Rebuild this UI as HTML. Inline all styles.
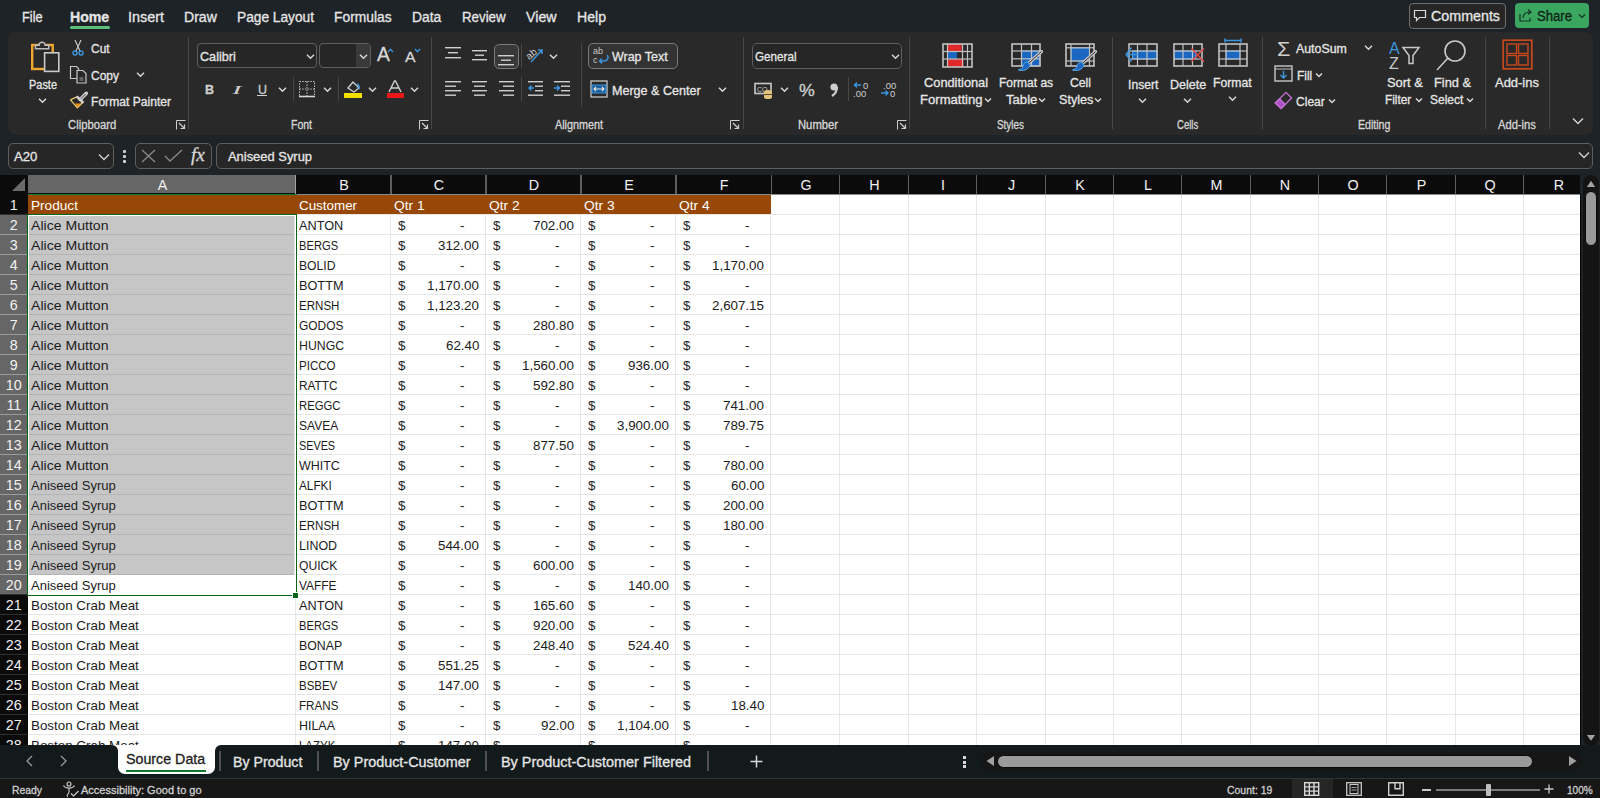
<!DOCTYPE html><html><head><meta charset="utf-8"><style>
html,body{margin:0;padding:0;width:1600px;height:798px;overflow:hidden;background:#1e2327;}
body>div,body div{position:absolute;}
.t{white-space:pre;font-family:"Liberation Sans",sans-serif;}
.u{-webkit-text-stroke:0.3px currentColor;}
</style></head><body>
<div style="left:0px;top:0px;width:1600px;height:175px;background:#1e2327;"></div>
<div class="t u" style="left:22.40px;top:10.10px;font-size:14px;line-height:14px;color:#e6e6e6;transform:scaleX(0.9131);transform-origin:0 0;">File</div>
<div class="t u" style="left:70.40px;top:10.10px;font-size:14px;line-height:14px;color:#e6e6e6;font-weight:700;transform:scaleX(1.0078);transform-origin:0 0;">Home</div>
<div class="t u" style="left:128.00px;top:10.10px;font-size:14px;line-height:14px;color:#e6e6e6;transform:scaleX(1.0282);transform-origin:0 0;">Insert</div>
<div class="t u" style="left:183.60px;top:10.10px;font-size:14px;line-height:14px;color:#e6e6e6;transform:scaleX(1.0040);transform-origin:0 0;">Draw</div>
<div class="t u" style="left:237.00px;top:10.10px;font-size:14px;line-height:14px;color:#e6e6e6;transform:scaleX(0.9794);transform-origin:0 0;">Page Layout</div>
<div class="t u" style="left:334.40px;top:10.10px;font-size:14px;line-height:14px;color:#e6e6e6;transform:scaleX(0.9872);transform-origin:0 0;">Formulas</div>
<div class="t u" style="left:412.40px;top:10.10px;font-size:14px;line-height:14px;color:#e6e6e6;transform:scaleX(0.9874);transform-origin:0 0;">Data</div>
<div class="t u" style="left:462.40px;top:10.10px;font-size:14px;line-height:14px;color:#e6e6e6;transform:scaleX(0.9498);transform-origin:0 0;">Review</div>
<div class="t u" style="left:526.40px;top:10.10px;font-size:14px;line-height:14px;color:#e6e6e6;transform:scaleX(1.0168);transform-origin:0 0;">View</div>
<div class="t u" style="left:576.60px;top:10.10px;font-size:14px;line-height:14px;color:#e6e6e6;transform:scaleX(1.0072);transform-origin:0 0;">Help</div>
<div style="left:70px;top:26px;width:40px;height:3px;background:#5cc07c;border-radius:2px;"></div>
<div style="left:1409px;top:3px;width:97px;height:25.5px;background:#262626;border:1.5px solid #6e6e6e;border-radius:4px;box-sizing:border-box;"></div>
<svg style="position:absolute;left:1413px;top:9px;" width="14" height="13" viewBox="0 0 14 13"><path d="M1.5 1.5h11v7h-6l-3 3v-3h-2z" fill="none" stroke="#dcdcdc" stroke-width="1.2"/></svg>
<div class="t u" style="left:1431.00px;top:9.40px;font-size:14px;line-height:14px;color:#e6e6e6;transform:scaleX(1.0194);transform-origin:0 0;">Comments</div>
<div style="left:1515px;top:3px;width:74px;height:25px;background:#3aa660;border-radius:4px;"></div>
<svg style="position:absolute;left:1518px;top:8px;" width="16" height="15" viewBox="0 0 16 15"><path d="M2 6v7h10v-3" fill="none" stroke="#163020" stroke-width="1.2"/><path d="M5 10c0-4 3-6 7-6M10 1.5l3 2.5-3 2.5" fill="none" stroke="#163020" stroke-width="1.2"/></svg>
<div class="t u" style="left:1537.00px;top:9.40px;font-size:14px;line-height:14px;color:#0e2316;transform:scaleX(0.9368);transform-origin:0 0;">Share</div>
<svg style="position:absolute;left:1577px;top:11px;" width="10" height="10" viewBox="0 0 10 10"><polyline points="2,3.5 5,6.5 8,3.5" fill="none" stroke="#163020" stroke-width="1.2"/></svg>
<div style="left:8px;top:32px;width:1585px;height:103px;background:#292929;border-radius:8px;"></div>
<div style="left:188px;top:37px;width:1px;height:92px;background:#474747;"></div>
<div style="left:431px;top:37px;width:1px;height:92px;background:#474747;"></div>
<div style="left:743px;top:37px;width:1px;height:92px;background:#474747;"></div>
<div style="left:909px;top:37px;width:1px;height:92px;background:#474747;"></div>
<div style="left:1112px;top:37px;width:1px;height:92px;background:#474747;"></div>
<div style="left:1262px;top:37px;width:1px;height:92px;background:#474747;"></div>
<div style="left:1485px;top:37px;width:1px;height:92px;background:#474747;"></div>
<div style="left:1549px;top:37px;width:1px;height:92px;background:#474747;"></div>
<div class="t u" style="left:67.50px;top:119.30px;font-size:12px;line-height:12px;color:#d8d8d8;transform:scaleX(0.9403);transform-origin:0 0;">Clipboard</div>
<div class="t u" style="left:291.00px;top:119.30px;font-size:12px;line-height:12px;color:#d8d8d8;transform:scaleX(0.8746);transform-origin:0 0;">Font</div>
<div class="t u" style="left:555.00px;top:119.30px;font-size:12px;line-height:12px;color:#d8d8d8;transform:scaleX(0.8995);transform-origin:0 0;">Alignment</div>
<div class="t u" style="left:797.60px;top:119.30px;font-size:12px;line-height:12px;color:#d8d8d8;transform:scaleX(0.9372);transform-origin:0 0;">Number</div>
<div class="t u" style="left:997.00px;top:119.30px;font-size:12px;line-height:12px;color:#d8d8d8;transform:scaleX(0.8262);transform-origin:0 0;">Styles</div>
<div class="t u" style="left:1176.80px;top:119.30px;font-size:12px;line-height:12px;color:#d8d8d8;transform:scaleX(0.7948);transform-origin:0 0;">Cells</div>
<div class="t u" style="left:1357.60px;top:119.30px;font-size:12px;line-height:12px;color:#d8d8d8;transform:scaleX(0.8830);transform-origin:0 0;">Editing</div>
<div class="t u" style="left:1498.00px;top:119.30px;font-size:12px;line-height:12px;color:#d8d8d8;transform:scaleX(0.9290);transform-origin:0 0;">Add-ins</div>
<svg style="position:absolute;left:175.5px;top:120px;" width="10" height="10" viewBox="0 0 10 10"><path d="M0.5 9.5V0.5H9.5" fill="none" stroke="#cfcfcf" stroke-width="1"/><path d="M0.5 0.5" /><path d="M3 3L8.5 8.5M8.5 4.5V8.5H4.5" fill="none" stroke="#cfcfcf" stroke-width="1.2"/></svg>
<svg style="position:absolute;left:419px;top:120px;" width="10" height="10" viewBox="0 0 10 10"><path d="M0.5 9.5V0.5H9.5" fill="none" stroke="#cfcfcf" stroke-width="1"/><path d="M0.5 0.5" /><path d="M3 3L8.5 8.5M8.5 4.5V8.5H4.5" fill="none" stroke="#cfcfcf" stroke-width="1.2"/></svg>
<svg style="position:absolute;left:730px;top:120px;" width="10" height="10" viewBox="0 0 10 10"><path d="M0.5 9.5V0.5H9.5" fill="none" stroke="#cfcfcf" stroke-width="1"/><path d="M0.5 0.5" /><path d="M3 3L8.5 8.5M8.5 4.5V8.5H4.5" fill="none" stroke="#cfcfcf" stroke-width="1.2"/></svg>
<svg style="position:absolute;left:897px;top:120px;" width="10" height="10" viewBox="0 0 10 10"><path d="M0.5 9.5V0.5H9.5" fill="none" stroke="#cfcfcf" stroke-width="1"/><path d="M0.5 0.5" /><path d="M3 3L8.5 8.5M8.5 4.5V8.5H4.5" fill="none" stroke="#cfcfcf" stroke-width="1.2"/></svg>
<svg style="position:absolute;left:30px;top:39px;" width="31" height="34" viewBox="0 0 31 34"><rect x="2.2" y="6" width="20.5" height="24" fill="none" stroke="#f0a830" stroke-width="2.4"/><path d="M5.5 9.8V6.2h3.6a3 3 0 0 1 6 0h3.6v3.6z" fill="#292929" stroke="#bdbdbd" stroke-width="1.5"/><rect x="14.6" y="13.8" width="14.2" height="18.6" fill="#292929" stroke="#cacaca" stroke-width="1.6"/></svg>
<div class="t u" style="left:28.50px;top:78.88px;font-size:12.5px;line-height:12.5px;color:#e6e6e6;transform:scaleX(0.8760);transform-origin:0 0;">Paste</div>
<svg style="position:absolute;left:36.5px;top:94.5px;" width="11.0" height="11.0" viewBox="0 0 11.0 11.0"><polyline points="2,3.8 5.5,7.2 9.0,3.8" fill="none" stroke="#d8d8d8" stroke-width="1.5"/></svg>
<svg style="position:absolute;left:72px;top:39px;" width="14" height="18" viewBox="0 0 14 18"><path d="M3 1l5 11M9 1L4 12" stroke="#cfcfcf" stroke-width="1.1" fill="none"/><circle cx="3" cy="14" r="2" fill="none" stroke="#3c95de" stroke-width="1.4"/><circle cx="9" cy="14" r="2" fill="none" stroke="#3c95de" stroke-width="1.4"/></svg>
<div class="t u" style="left:91.00px;top:42.88px;font-size:12.5px;line-height:12.5px;color:#e6e6e6;transform:scaleX(0.9562);transform-origin:0 0;">Cut</div>
<svg style="position:absolute;left:69px;top:65px;" width="19" height="19" viewBox="0 0 19 19"><path d="M1.5 1.5h6l2 2v10h-8z" fill="none" stroke="#c8c8c8" stroke-width="1.2"/><path d="M8 5.5h6l3 3v9.5h-9z" fill="#292929" stroke="#c8c8c8" stroke-width="1.2"/><path d="M10.5 13h4M10.5 15h4" stroke="#9a9a9a" stroke-width="1"/></svg>
<div class="t u" style="left:91.00px;top:69.88px;font-size:12.5px;line-height:12.5px;color:#e6e6e6;transform:scaleX(0.9595);transform-origin:0 0;">Copy</div>
<svg style="position:absolute;left:135.0px;top:68.5px;" width="11.0" height="11.0" viewBox="0 0 11.0 11.0"><polyline points="2,3.8 5.5,7.2 9.0,3.8" fill="none" stroke="#d8d8d8" stroke-width="1.5"/></svg>
<svg style="position:absolute;left:69px;top:90px;" width="21" height="20" viewBox="0 0 21 20"><path d="M1.5 9.9L7.9 6.8 14.2 12 8.3 17.8z" fill="#292929" stroke="#f2d272" stroke-width="1.2" stroke-linejoin="round"/><path d="M5.5 13.5L12.5 13.5 8.4 17z" fill="#e89020"/><path d="M7.8 6.3l6.5 6.5" stroke="#d0d0d0" stroke-width="2.6"/><path d="M11.2 9.4L17.3 3.3" stroke="#d0d0d0" stroke-width="3.6" stroke-linecap="round"/><path d="M12 8.6L16.6 4" stroke="#3a3a3a" stroke-width="1"/></svg>
<div class="t u" style="left:91.00px;top:95.88px;font-size:12.5px;line-height:12.5px;color:#e6e6e6;transform:scaleX(0.9677);transform-origin:0 0;">Format Painter</div>
<div style="left:197px;top:43px;width:120px;height:25px;background:#262626;border:1.5px solid #5e5e5e;border-radius:4px;box-sizing:border-box;"></div>
<div class="t u" style="left:199.50px;top:50.45px;font-size:13px;line-height:13px;color:#e6e6e6;transform:scaleX(0.9717);transform-origin:0 0;">Calibri</div>
<svg style="position:absolute;left:305.0px;top:50.5px;" width="11.0" height="11.0" viewBox="0 0 11.0 11.0"><polyline points="2,3.8 5.5,7.2 9.0,3.8" fill="none" stroke="#d8d8d8" stroke-width="1.5"/></svg>
<div style="left:319px;top:43px;width:52px;height:25px;background:#262626;border:1.5px solid #5e5e5e;border-radius:4px;box-sizing:border-box;"></div>
<div style="left:356px;top:44px;width:14px;height:23px;background:#3a3a3a;border-radius:0 3px 3px 0;"></div>
<svg style="position:absolute;left:357.5px;top:50.5px;" width="11.0" height="11.0" viewBox="0 0 11.0 11.0"><polyline points="2,3.8 5.5,7.2 9.0,3.8" fill="none" stroke="#d8d8d8" stroke-width="1.5"/></svg>
<div class="t u" style="left:376.50px;top:44.92px;font-size:19.5px;line-height:19.5px;color:#d8d8d8;transform:scaleX(0.9841);transform-origin:0 0;">A</div>
<svg style="position:absolute;left:387px;top:48px;" width="7" height="5" viewBox="0 0 7 5"><polyline points="1,4 3.5,1.2 6,4" fill="none" stroke="#3c95de" stroke-width="1.3"/></svg>
<div class="t u" style="left:404.80px;top:48.75px;font-size:15px;line-height:15px;color:#d8d8d8;transform:scaleX(1.0494);transform-origin:0 0;">A</div>
<svg style="position:absolute;left:413.5px;top:47.5px;" width="7" height="5" viewBox="0 0 7 5"><polyline points="1,1 3.5,3.8 6,1" fill="none" stroke="#3c95de" stroke-width="1.3"/></svg>
<div class="t u" style="left:205.00px;top:82.53px;font-size:13.5px;line-height:13.5px;color:#cfcfcf;font-weight:700;transform:scaleX(0.9231);transform-origin:0 0;">B</div>
<div class="t" style="left:232.00px;top:82.53px;font-size:13.5px;line-height:13.5px;color:#cfcfcf;transform:scaleX(2.1331);transform-origin:0 0;font-family:'Liberation Serif';font-style:italic;">I</div>
<div class="t u" style="left:257.50px;top:82.95px;font-size:13px;line-height:13px;color:#cfcfcf;transform:scaleX(0.9586);transform-origin:0 0;">U</div>
<div style="left:257px;top:95px;width:10px;height:1px;background:#cfcfcf;"></div>
<svg style="position:absolute;left:276.5px;top:83.5px;" width="11.0" height="11.0" viewBox="0 0 11.0 11.0"><polyline points="2,3.8 5.5,7.2 9.0,3.8" fill="none" stroke="#d8d8d8" stroke-width="1.5"/></svg>
<div style="left:293px;top:77px;width:1px;height:24px;background:#474747;"></div>
<svg style="position:absolute;left:298px;top:80px;" width="19" height="18" viewBox="0 0 19 18"><path d="M1.5 1.5h15v15h-15zM9 1.5v15M1.5 9h15" fill="none" stroke="#bdbdbd" stroke-width="1" stroke-dasharray="1.5 1.2"/><path d="M1 16.5h16" stroke="#d8d8d8" stroke-width="1.6"/></svg>
<svg style="position:absolute;left:321.5px;top:83.5px;" width="11.0" height="11.0" viewBox="0 0 11.0 11.0"><polyline points="2,3.8 5.5,7.2 9.0,3.8" fill="none" stroke="#d8d8d8" stroke-width="1.5"/></svg>
<div style="left:338px;top:77px;width:1px;height:24px;background:#474747;"></div>
<svg style="position:absolute;left:344px;top:80px;" width="19" height="19" viewBox="0 0 19 19"><path d="M4 8l5-6 6 6-5 4z" fill="none" stroke="#cfcfcf" stroke-width="1.3"/><path d="M13 4c2 1 2.5 3 2 5" fill="none" stroke="#3c95de" stroke-width="1.4"/><rect x="0" y="13" width="18" height="5" fill="#f4e000"/></svg>
<svg style="position:absolute;left:366.5px;top:83.5px;" width="11.0" height="11.0" viewBox="0 0 11.0 11.0"><polyline points="2,3.8 5.5,7.2 9.0,3.8" fill="none" stroke="#d8d8d8" stroke-width="1.5"/></svg>
<svg style="position:absolute;left:386px;top:80px;" width="19" height="19" viewBox="0 0 19 19"><path d="M3 12L8.5 1h1L15 12M5.5 8h8" fill="none" stroke="#cfcfcf" stroke-width="1.4"/><rect x="1" y="13" width="17" height="5" fill="#e81818"/></svg>
<svg style="position:absolute;left:409.0px;top:83.5px;" width="11.0" height="11.0" viewBox="0 0 11.0 11.0"><polyline points="2,3.8 5.5,7.2 9.0,3.8" fill="none" stroke="#d8d8d8" stroke-width="1.5"/></svg>
<svg style="position:absolute;left:445px;top:46px;" width="20" height="20" viewBox="0 0 20 20"><rect x="0" y="1" width="16" height="1.4" fill="#cfcfcf"/><rect x="3" y="6" width="10" height="1.4" fill="#cfcfcf"/><rect x="0" y="11" width="16" height="1.4" fill="#cfcfcf"/></svg>
<svg style="position:absolute;left:472px;top:49px;" width="20" height="20" viewBox="0 0 20 20"><rect x="0" y="1" width="15" height="1.4" fill="#cfcfcf"/><rect x="3" y="5.5" width="9" height="1.4" fill="#cfcfcf"/><rect x="0" y="10" width="15" height="1.4" fill="#cfcfcf"/></svg>
<div style="left:494px;top:43.5px;width:24.5px;height:25px;background:#383838;border:1.5px solid #7a7a7a;border-radius:5px;box-sizing:border-box;"></div>
<svg style="position:absolute;left:498px;top:54px;" width="20" height="20" viewBox="0 0 20 20"><rect x="0" y="1" width="16" height="1.4" fill="#cfcfcf"/><rect x="3" y="5.5" width="10" height="1.4" fill="#cfcfcf"/><rect x="0" y="10" width="16" height="1.4" fill="#cfcfcf"/></svg>
<div style="left:521px;top:44px;width:1px;height:24px;background:#474747;"></div>
<svg style="position:absolute;left:526px;top:46px;" width="20" height="18" viewBox="0 0 20 18"><text x="0" y="11" font-family="Liberation Sans" font-size="10" fill="#cfcfcf" transform="rotate(-40 6 8)">ab</text><path d="M5 16L16 4M12 4h4v4" fill="none" stroke="#3c95de" stroke-width="1.5"/></svg>
<svg style="position:absolute;left:547.5px;top:50.5px;" width="11.0" height="11.0" viewBox="0 0 11.0 11.0"><polyline points="2,3.8 5.5,7.2 9.0,3.8" fill="none" stroke="#d8d8d8" stroke-width="1.5"/></svg>
<div style="left:581px;top:43px;width:1px;height:64px;background:#474747;"></div>
<div style="left:587.5px;top:43px;width:90px;height:25.5px;background:#333333;border:1.5px solid #7a7a7a;border-radius:5px;box-sizing:border-box;"></div>
<svg style="position:absolute;left:593px;top:46px;" width="17" height="19" viewBox="0 0 17 19"><text x="0" y="8" font-family="Liberation Sans" font-size="9" fill="#c8c8c8">ab</text><text x="0" y="17" font-family="Liberation Sans" font-size="9" fill="#c8c8c8">c</text><path d="M14 9c2 2 1 6-3 6H7M9 12.5l-2.5 2.5 2.5 2.5" fill="none" stroke="#3c95de" stroke-width="1.4"/></svg>
<div class="t u" style="left:612.40px;top:50.45px;font-size:13px;line-height:13px;color:#e6e6e6;transform:scaleX(0.9579);transform-origin:0 0;">Wrap Text</div>
<svg style="position:absolute;left:445px;top:80px;" width="20" height="20" viewBox="0 0 20 20"><rect x="0" y="1" width="16" height="1.4" fill="#cfcfcf"/><rect x="0" y="5.5" width="11" height="1.4" fill="#cfcfcf"/><rect x="0" y="10" width="16" height="1.4" fill="#cfcfcf"/><rect x="0" y="14.5" width="11" height="1.4" fill="#cfcfcf"/></svg>
<svg style="position:absolute;left:472px;top:80px;" width="20" height="20" viewBox="0 0 20 20"><rect x="0" y="1" width="15" height="1.4" fill="#cfcfcf"/><rect x="2" y="5.5" width="11" height="1.4" fill="#cfcfcf"/><rect x="0" y="10" width="15" height="1.4" fill="#cfcfcf"/><rect x="2" y="14.5" width="11" height="1.4" fill="#cfcfcf"/></svg>
<svg style="position:absolute;left:499px;top:80px;" width="20" height="20" viewBox="0 0 20 20"><rect x="0" y="1" width="15" height="1.4" fill="#cfcfcf"/><rect x="4" y="5.5" width="11" height="1.4" fill="#cfcfcf"/><rect x="0" y="10" width="15" height="1.4" fill="#cfcfcf"/><rect x="4" y="14.5" width="11" height="1.4" fill="#cfcfcf"/></svg>
<div style="left:521px;top:77px;width:1px;height:24px;background:#474747;"></div>
<svg style="position:absolute;left:528px;top:80px;" width="16" height="17" viewBox="0 0 16 17"><rect x="0" y="1" width="15" height="1.4" fill="#cfcfcf"/><rect x="7" y="5.5" width="8" height="1.4" fill="#cfcfcf"/><rect x="7" y="10" width="8" height="1.4" fill="#cfcfcf"/><rect x="0" y="14.5" width="15" height="1.4" fill="#cfcfcf"/><path d="M6 8H1M3.5 5.5L1 8l2.5 2.5" fill="none" stroke="#3c95de" stroke-width="1.4"/></svg>
<svg style="position:absolute;left:554px;top:80px;" width="17" height="17" viewBox="0 0 17 17"><rect x="0" y="1" width="16" height="1.4" fill="#cfcfcf"/><rect x="7" y="5.5" width="9" height="1.4" fill="#cfcfcf"/><rect x="7" y="10" width="9" height="1.4" fill="#cfcfcf"/><rect x="0" y="14.5" width="16" height="1.4" fill="#cfcfcf"/><path d="M0 8h5.5M3 5.5L5.5 8 3 10.5" fill="none" stroke="#3c95de" stroke-width="1.4"/></svg>
<svg style="position:absolute;left:590px;top:80px;" width="19" height="18" viewBox="0 0 19 18"><rect x="1" y="1" width="16" height="16" fill="none" stroke="#bdbdbd" stroke-width="1.4"/><rect x="2" y="5" width="14" height="8" fill="#1c5e9a" stroke="#3c95de" stroke-width="1"/><path d="M4 9h10M6 7l-2 2 2 2M12 7l2 2-2 2" fill="none" stroke="#e8e8e8" stroke-width="1.1"/></svg>
<div class="t u" style="left:612.40px;top:84.45px;font-size:13px;line-height:13px;color:#e6e6e6;transform:scaleX(0.9655);transform-origin:0 0;">Merge &amp; Center</div>
<svg style="position:absolute;left:716.5px;top:84.0px;" width="11.0" height="11.0" viewBox="0 0 11.0 11.0"><polyline points="2,3.8 5.5,7.2 9.0,3.8" fill="none" stroke="#d8d8d8" stroke-width="1.5"/></svg>
<div style="left:751.5px;top:43px;width:150px;height:25.5px;background:#262626;border:1.5px solid #5e5e5e;border-radius:5px;box-sizing:border-box;"></div>
<div class="t u" style="left:754.50px;top:50.45px;font-size:13px;line-height:13px;color:#e6e6e6;transform:scaleX(0.8973);transform-origin:0 0;">General</div>
<svg style="position:absolute;left:890.0px;top:50.5px;" width="11.0" height="11.0" viewBox="0 0 11.0 11.0"><polyline points="2,3.8 5.5,7.2 9.0,3.8" fill="none" stroke="#d8d8d8" stroke-width="1.5"/></svg>
<svg style="position:absolute;left:754px;top:82px;" width="20" height="17" viewBox="0 0 20 17"><rect x="1" y="1.5" width="16" height="10" fill="none" stroke="#c8c8c8" stroke-width="1.6"/><text x="3" y="10" font-size="7" font-family="Liberation Sans" fill="#c8c8c8">CO</text><ellipse cx="14" cy="10" rx="4" ry="2" fill="#e6c27a"/><rect x="10" y="10" width="8" height="5" fill="#e6c27a"/><ellipse cx="14" cy="15" rx="4" ry="2" fill="#e6c27a"/><path d="M10 12.5h8" stroke="#292929" stroke-width="0.8"/></svg>
<svg style="position:absolute;left:778.5px;top:84.0px;" width="11.0" height="11.0" viewBox="0 0 11.0 11.0"><polyline points="2,3.8 5.5,7.2 9.0,3.8" fill="none" stroke="#d8d8d8" stroke-width="1.5"/></svg>
<div class="t u" style="left:798.60px;top:83.40px;font-size:16px;line-height:16px;color:#cfcfcf;transform:scaleX(1.1106);transform-origin:0 0;">%</div>
<svg style="position:absolute;left:829px;top:82px;" width="11" height="15" viewBox="0 0 11 15"><circle cx="5" cy="5" r="3.6" fill="#cfcfcf"/><path d="M8 5c0 4-2 7-5 9" fill="none" stroke="#cfcfcf" stroke-width="2.2"/></svg>
<div style="left:848px;top:77px;width:1px;height:24px;background:#474747;"></div>
<svg style="position:absolute;left:853px;top:80px;" width="18" height="18" viewBox="0 0 18 18"><path d="M8 5H1.5M4 2.5L1.5 5 4 7.5" fill="none" stroke="#3c95de" stroke-width="1.4"/><text x="10" y="9" font-size="9.5" font-family="Liberation Sans" fill="#cfcfcf">0</text><text x="0" y="17" font-size="9.5" font-family="Liberation Sans" fill="#cfcfcf">.00</text></svg>
<svg style="position:absolute;left:880px;top:80px;" width="18" height="18" viewBox="0 0 18 18"><text x="3" y="9" font-size="9.5" font-family="Liberation Sans" fill="#cfcfcf">.00</text><text x="10" y="17" font-size="9.5" font-family="Liberation Sans" fill="#cfcfcf">0</text><path d="M1 13h7M5.5 10.5L8 13l-2.5 2.5" fill="none" stroke="#3c95de" stroke-width="1.4"/></svg>
<svg style="position:absolute;left:942px;top:43px;" width="31" height="25" viewBox="0 0 31 25"><rect x="5.5" y="1" width="14" height="7.5" fill="#e0282a"/><rect x="5.5" y="8.5" width="9.5" height="7.5" fill="#1a66c0"/><rect x="5.5" y="16" width="16" height="8" fill="#e0282a"/><rect x="1" y="1" width="29" height="23" fill="none" stroke="#c2c2c2" stroke-width="1.6"/><path d="M5.5 1V24" stroke="#c2c2c2" stroke-width="1.2"/><path d="M20.5 1V24" stroke="#c2c2c2" stroke-width="1.2"/><path d="M25.5 1V24" stroke="#c2c2c2" stroke-width="1.2"/><path d="M1 8.5H30" stroke="#c2c2c2" stroke-width="1.2"/><path d="M1 16H30" stroke="#c2c2c2" stroke-width="1.2"/></svg>
<div class="t u" style="left:924.30px;top:76.45px;font-size:13px;line-height:13px;color:#e6e6e6;transform:scaleX(0.9854);transform-origin:0 0;">Conditional</div>
<div class="t u" style="left:920.40px;top:92.95px;font-size:13px;line-height:13px;color:#e6e6e6;transform:scaleX(1.0075);transform-origin:0 0;">Formatting</div>
<svg style="position:absolute;left:983px;top:94.5px;" width="10" height="10" viewBox="0 0 10 10"><polyline points="2,3.5 5,6.5 8,3.5" fill="none" stroke="#d8d8d8" stroke-width="1.5"/></svg>
<svg style="position:absolute;left:1011px;top:43px;" width="30" height="24" viewBox="0 0 30 24"><rect x="10.5" y="8" width="18.5" height="15" fill="#1a66c0" stroke="#5aaef0" stroke-width="0.8"/><rect x="1" y="1" width="28" height="22" fill="none" stroke="#c2c2c2" stroke-width="1.6"/><path d="M10.5 1V23" stroke="#c2c2c2" stroke-width="1.2"/><path d="M20.5 1V23" stroke="#c2c2c2" stroke-width="1.2"/><path d="M1 8H29" stroke="#c2c2c2" stroke-width="1.2"/><path d="M1 15.8H29" stroke="#c2c2c2" stroke-width="1.2"/></svg>
<svg style="position:absolute;left:1018px;top:50px;" width="26" height="23" viewBox="0 0 26 23"><path d="M23.5 1.5L11 13" stroke="#c8c8c8" stroke-width="3.2" stroke-linecap="round"/><path d="M23.5 1.5L11 13" stroke="#292929" stroke-width="1"/><path d="M10.5 12.5c-3-1-5.5 1-5.5 3.5 0 2-2.5 3.2-4.5 4 4.5 1.2 9.5 0 11.5-4.5z" fill="#1a66c0" stroke="#5aaef0" stroke-width="1"/></svg>
<div class="t u" style="left:998.70px;top:76.45px;font-size:13px;line-height:13px;color:#e6e6e6;transform:scaleX(0.9246);transform-origin:0 0;">Format as</div>
<div class="t u" style="left:1005.60px;top:92.95px;font-size:13px;line-height:13px;color:#e6e6e6;transform:scaleX(1.0103);transform-origin:0 0;">Table</div>
<svg style="position:absolute;left:1036.5px;top:94.5px;" width="10" height="10" viewBox="0 0 10 10"><polyline points="2,3.5 5,6.5 8,3.5" fill="none" stroke="#d8d8d8" stroke-width="1.5"/></svg>
<svg style="position:absolute;left:1065px;top:43px;" width="30" height="24" viewBox="0 0 30 24"><rect x="6" y="4.8" width="18.5" height="13.2" fill="#1a66c0" stroke="#5aaef0" stroke-width="0.8"/><rect x="1" y="1" width="28" height="22" fill="none" stroke="#c2c2c2" stroke-width="1.6"/><path d="M6 1V23" stroke="#c2c2c2" stroke-width="1.2"/><path d="M24.5 1V23" stroke="#c2c2c2" stroke-width="1.2"/><path d="M1 4.8H29" stroke="#c2c2c2" stroke-width="1.2"/><path d="M1 18H29" stroke="#c2c2c2" stroke-width="1.2"/></svg>
<svg style="position:absolute;left:1072px;top:50px;" width="26" height="23" viewBox="0 0 26 23"><path d="M23.5 1.5L11 13" stroke="#c8c8c8" stroke-width="3.2" stroke-linecap="round"/><path d="M23.5 1.5L11 13" stroke="#292929" stroke-width="1"/><path d="M10.5 12.5c-3-1-5.5 1-5.5 3.5 0 2-2.5 3.2-4.5 4 4.5 1.2 9.5 0 11.5-4.5z" fill="#1a66c0" stroke="#5aaef0" stroke-width="1"/></svg>
<div class="t u" style="left:1070.00px;top:76.45px;font-size:13px;line-height:13px;color:#e6e6e6;transform:scaleX(0.9377);transform-origin:0 0;">Cell</div>
<div class="t u" style="left:1058.70px;top:92.95px;font-size:13px;line-height:13px;color:#e6e6e6;transform:scaleX(0.9689);transform-origin:0 0;">Styles</div>
<svg style="position:absolute;left:1093px;top:94.5px;" width="10" height="10" viewBox="0 0 10 10"><polyline points="2,3.5 5,6.5 8,3.5" fill="none" stroke="#d8d8d8" stroke-width="1.5"/></svg>
<svg style="position:absolute;left:1128px;top:43px;" width="30" height="24" viewBox="0 0 30 24"><rect x="4.5" y="8" width="27" height="8" fill="#1a66c0" stroke="#5aaef0" stroke-width="1"/><rect x="1" y="1" width="28" height="22" fill="none" stroke="#c2c2c2" stroke-width="1.6"/><path d="M9.5 1V23" stroke="#c2c2c2" stroke-width="1.2"/><path d="M19 1V23" stroke="#c2c2c2" stroke-width="1.2"/><path d="M1 8H29" stroke="#c2c2c2" stroke-width="1.2"/><path d="M1 16H29" stroke="#c2c2c2" stroke-width="1.2"/></svg>
<svg style="position:absolute;left:1125px;top:46px;" width="14" height="17" viewBox="0 0 14 17"><path d="M13 8.5H1.5M6.5 1.5L1 8.5l5.5 7" fill="none" stroke="#3c95de" stroke-width="1.3"/></svg>
<div class="t u" style="left:1127.60px;top:78.45px;font-size:13px;line-height:13px;color:#e6e6e6;transform:scaleX(0.9350);transform-origin:0 0;">Insert</div>
<svg style="position:absolute;left:1137.0px;top:94.5px;" width="11.0" height="11.0" viewBox="0 0 11.0 11.0"><polyline points="2,3.8 5.5,7.2 9.0,3.8" fill="none" stroke="#d8d8d8" stroke-width="1.5"/></svg>
<svg style="position:absolute;left:1173px;top:43px;" width="30" height="24" viewBox="0 0 30 24"><rect x="0" y="8" width="23" height="8" fill="#1a66c0" stroke="#5aaef0" stroke-width="1"/><path d="M0 8v8" stroke="#292929" stroke-width="3"/><rect x="1" y="1" width="28" height="22" fill="none" stroke="#c2c2c2" stroke-width="1.6"/><path d="M10 1V23" stroke="#c2c2c2" stroke-width="1.2"/><path d="M19.5 1V23" stroke="#c2c2c2" stroke-width="1.2"/><path d="M1 8H29" stroke="#c2c2c2" stroke-width="1.2"/><path d="M1 16H29" stroke="#c2c2c2" stroke-width="1.2"/></svg>
<svg style="position:absolute;left:1190px;top:47px;" width="15" height="16" viewBox="0 0 15 16"><path d="M1.5 1.5L14 14.5M14 1.5L1.5 14.5" stroke="#e04848" stroke-width="1.4"/></svg>
<div class="t u" style="left:1169.50px;top:78.45px;font-size:13px;line-height:13px;color:#e6e6e6;transform:scaleX(0.9660);transform-origin:0 0;">Delete</div>
<svg style="position:absolute;left:1182.0px;top:94.5px;" width="11.0" height="11.0" viewBox="0 0 11.0 11.0"><polyline points="2,3.8 5.5,7.2 9.0,3.8" fill="none" stroke="#d8d8d8" stroke-width="1.5"/></svg>
<svg style="position:absolute;left:1224px;top:37.5px;" width="18" height="5" viewBox="0 0 18 5"><path d="M1 0.5v4M17 0.5v4M1 2.5h16" stroke="#3c95de" stroke-width="1.5"/></svg>
<svg style="position:absolute;left:1218px;top:43px;" width="30" height="24" viewBox="0 0 30 24"><rect x="8" y="8" width="14" height="8" fill="#1a66c0" stroke="#5aaef0" stroke-width="1"/><rect x="1" y="1" width="28" height="22" fill="none" stroke="#c2c2c2" stroke-width="1.6"/><path d="M8 1V23" stroke="#c2c2c2" stroke-width="1.2"/><path d="M22 1V23" stroke="#c2c2c2" stroke-width="1.2"/><path d="M1 8H29" stroke="#c2c2c2" stroke-width="1.2"/><path d="M1 16H29" stroke="#c2c2c2" stroke-width="1.2"/></svg>
<div class="t u" style="left:1213.40px;top:76.45px;font-size:13px;line-height:13px;color:#e6e6e6;transform:scaleX(0.9375);transform-origin:0 0;">Format</div>
<svg style="position:absolute;left:1227.0px;top:92.5px;" width="11.0" height="11.0" viewBox="0 0 11.0 11.0"><polyline points="2,3.8 5.5,7.2 9.0,3.8" fill="none" stroke="#d8d8d8" stroke-width="1.5"/></svg>
<div class="t" style="left:1277.00px;top:38.50px;font-size:20px;line-height:20px;color:#cfcfcf;transform:scaleX(1.0757);transform-origin:0 0;">&#931;</div>
<div class="t u" style="left:1296.00px;top:42.88px;font-size:12.5px;line-height:12.5px;color:#e6e6e6;transform:scaleX(0.9880);transform-origin:0 0;">AutoSum</div>
<svg style="position:absolute;left:1363.0px;top:42.0px;" width="11.0" height="11.0" viewBox="0 0 11.0 11.0"><polyline points="2,3.8 5.5,7.2 9.0,3.8" fill="none" stroke="#d8d8d8" stroke-width="1.5"/></svg>
<svg style="position:absolute;left:1274px;top:65px;" width="20" height="18" viewBox="0 0 20 18"><rect x="1" y="1" width="17" height="15" fill="none" stroke="#bdbdbd" stroke-width="1.5"/><path d="M1 4h17" stroke="#bdbdbd" stroke-width="1"/><path d="M9.5 6v7M6.5 10l3 3 3-3" fill="none" stroke="#3c95de" stroke-width="1.4"/></svg>
<div class="t u" style="left:1296.50px;top:69.88px;font-size:12.5px;line-height:12.5px;color:#e6e6e6;transform:scaleX(0.9519);transform-origin:0 0;">Fill</div>
<svg style="position:absolute;left:1314.3px;top:69.5px;" width="10" height="10" viewBox="0 0 10 10"><polyline points="2,3.5 5,6.5 8,3.5" fill="none" stroke="#d8d8d8" stroke-width="1.5"/></svg>
<svg style="position:absolute;left:1274px;top:91px;" width="19" height="19" viewBox="0 0 19 19"><g transform="rotate(-45 9.5 9.5)"><rect x="2" y="5.5" width="15" height="8" fill="none" stroke="#c070d0" stroke-width="1.4"/><rect x="2" y="5.5" width="6" height="8" fill="#b050c8" stroke="#c070d0" stroke-width="1.4"/></g></svg>
<div class="t u" style="left:1296.00px;top:95.88px;font-size:12.5px;line-height:12.5px;color:#e6e6e6;transform:scaleX(0.9641);transform-origin:0 0;">Clear</div>
<svg style="position:absolute;left:1326.7px;top:95.5px;" width="10" height="10" viewBox="0 0 10 10"><polyline points="2,3.5 5,6.5 8,3.5" fill="none" stroke="#d8d8d8" stroke-width="1.5"/></svg>
<svg style="position:absolute;left:1388px;top:40px;" width="34" height="30" viewBox="0 0 34 30"><text x="1" y="14" font-family="Liberation Sans" font-size="16" fill="#3c95de">A</text><text x="1" y="29" font-family="Liberation Sans" font-size="16" fill="#c8c8c8">Z</text><path d="M15 7.5h16l-6 8v8h-4v-8z" fill="none" stroke="#c8c8c8" stroke-width="1.5"/></svg>
<div class="t u" style="left:1386.50px;top:76.45px;font-size:13px;line-height:13px;color:#e6e6e6;transform:scaleX(0.9938);transform-origin:0 0;">Sort &amp;</div>
<div class="t u" style="left:1384.70px;top:92.95px;font-size:13px;line-height:13px;color:#e6e6e6;transform:scaleX(0.9104);transform-origin:0 0;">Filter</div>
<svg style="position:absolute;left:1413.5px;top:94.5px;" width="10" height="10" viewBox="0 0 10 10"><polyline points="2,3.5 5,6.5 8,3.5" fill="none" stroke="#d8d8d8" stroke-width="1.5"/></svg>
<svg style="position:absolute;left:1435px;top:39px;" width="34" height="34" viewBox="0 0 34 34"><circle cx="20" cy="12" r="10" fill="none" stroke="#c8c8c8" stroke-width="1.6"/><path d="M13 19L2 31" stroke="#c8c8c8" stroke-width="1.6"/></svg>
<div class="t u" style="left:1434.00px;top:76.45px;font-size:13px;line-height:13px;color:#e6e6e6;transform:scaleX(0.9821);transform-origin:0 0;">Find &amp;</div>
<div class="t u" style="left:1429.60px;top:92.95px;font-size:13px;line-height:13px;color:#e6e6e6;transform:scaleX(0.9244);transform-origin:0 0;">Select</div>
<svg style="position:absolute;left:1464.5px;top:94.5px;" width="10" height="10" viewBox="0 0 10 10"><polyline points="2,3.5 5,6.5 8,3.5" fill="none" stroke="#d8d8d8" stroke-width="1.5"/></svg>
<svg style="position:absolute;left:1502px;top:39px;" width="32" height="32" viewBox="0 0 32 32"><rect x="1.2" y="1.2" width="28.6" height="28.6" fill="none" stroke="#c9491c" stroke-width="1.7"/><rect x="5" y="5" width="9.5" height="9.5" fill="none" stroke="#c9491c" stroke-width="1.4"/><rect x="16.5" y="5" width="9.5" height="9.5" fill="none" stroke="#c9491c" stroke-width="1.4"/><rect x="5" y="16.5" width="9.5" height="9.5" fill="none" stroke="#c9491c" stroke-width="1.4"/><rect x="16.5" y="16.5" width="9.5" height="9.5" fill="none" stroke="#c9491c" stroke-width="1.4"/></svg>
<div class="t u" style="left:1495.40px;top:76.45px;font-size:13px;line-height:13px;color:#e6e6e6;transform:scaleX(0.9959);transform-origin:0 0;">Add-ins</div>
<svg style="position:absolute;left:1571px;top:113.5px;" width="14" height="14" viewBox="0 0 14 14"><polyline points="2,4.5 7,9.5 12,4.5" fill="none" stroke="#d0d0d0" stroke-width="1.5"/></svg>
<div style="left:8px;top:143px;width:106px;height:25.5px;background:#262626;border:1.5px solid #5e5e5e;border-radius:5px;box-sizing:border-box;"></div>
<div class="t u" style="left:14.00px;top:150.03px;font-size:13.5px;line-height:13.5px;color:#e6e6e6;transform:scaleX(0.9741);transform-origin:0 0;">A20</div>
<svg style="position:absolute;left:96.5px;top:150px;" width="14" height="14" viewBox="0 0 14 14"><polyline points="2,4.5 7,9.5 12,4.5" fill="none" stroke="#d0d0d0" stroke-width="1.4"/></svg>
<div style="left:123px;top:150px;width:3px;height:3px;background:#d0d0d0;border-radius:1px;"></div>
<div style="left:123px;top:155px;width:3px;height:3px;background:#d0d0d0;border-radius:1px;"></div>
<div style="left:123px;top:160px;width:3px;height:3px;background:#d0d0d0;border-radius:1px;"></div>
<div style="left:135px;top:143px;width:76.5px;height:25.5px;background:#262626;border:1.5px solid #5e5e5e;border-radius:5px;box-sizing:border-box;"></div>
<svg style="position:absolute;left:141px;top:149px;" width="15" height="14" viewBox="0 0 15 14"><path d="M1 1L14 13M14 1L1 13" stroke="#8a8a8a" stroke-width="1.3"/></svg>
<svg style="position:absolute;left:164px;top:149px;" width="19" height="13" viewBox="0 0 19 13"><path d="M1 7l5 5L18 1" fill="none" stroke="#8a8a8a" stroke-width="1.3"/></svg>
<div class="t u" style="left:191.00px;top:145.70px;font-size:18px;line-height:18px;color:#d8d8d8;transform:scaleX(1.0714);transform-origin:0 0;font-family:'Liberation Serif';font-style:italic;">fx</div>
<div style="left:216px;top:143px;width:1377px;height:25.5px;background:#262626;border:1.5px solid #5e5e5e;border-radius:5px;box-sizing:border-box;"></div>
<div class="t u" style="left:228.00px;top:150.03px;font-size:13.5px;line-height:13.5px;color:#e6e6e6;transform:scaleX(0.9567);transform-origin:0 0;">Aniseed Syrup</div>
<svg style="position:absolute;left:1576.5px;top:148px;" width="14" height="14" viewBox="0 0 14 14"><polyline points="2,4.5 7,9.5 12,4.5" fill="none" stroke="#d0d0d0" stroke-width="1.4"/></svg>
<div style="left:0px;top:175px;width:1580px;height:20px;background:#0b0b0b;"></div>
<div style="left:0px;top:195px;width:28px;height:550px;background:#0b0b0b;"></div>
<div style="left:28px;top:195px;width:1552px;height:550px;background:#ffffff;"></div>
<div style="left:28px;top:175px;width:267px;height:18px;background:#666666;"></div>
<svg style="position:absolute;left:11px;top:177px;" width="16" height="16" viewBox="0 0 16 16"><path d="M14 1V14H1z" fill="#6b6b6b"/></svg>
<div style="left:295px;top:175px;width:1px;height:19px;background:#a0a0a0;"></div>
<div style="left:390px;top:175px;width:1.5px;height:19px;background:#5e5e5e;"></div>
<div style="left:485px;top:175px;width:1.5px;height:19px;background:#5e5e5e;"></div>
<div style="left:580px;top:175px;width:1.5px;height:19px;background:#5e5e5e;"></div>
<div style="left:675px;top:175px;width:1.5px;height:19px;background:#5e5e5e;"></div>
<div style="left:771px;top:175px;width:1px;height:19px;background:#5e5e5e;"></div>
<div style="left:839px;top:175px;width:1px;height:19px;background:#5e5e5e;"></div>
<div style="left:908px;top:175px;width:1px;height:19px;background:#5e5e5e;"></div>
<div style="left:976px;top:175px;width:1px;height:19px;background:#5e5e5e;"></div>
<div style="left:1045px;top:175px;width:1px;height:19px;background:#5e5e5e;"></div>
<div style="left:1113px;top:175px;width:1px;height:19px;background:#5e5e5e;"></div>
<div style="left:1181px;top:175px;width:1px;height:19px;background:#5e5e5e;"></div>
<div style="left:1250px;top:175px;width:1px;height:19px;background:#5e5e5e;"></div>
<div style="left:1318px;top:175px;width:1px;height:19px;background:#5e5e5e;"></div>
<div style="left:1386px;top:175px;width:1px;height:19px;background:#5e5e5e;"></div>
<div style="left:1455px;top:175px;width:1px;height:19px;background:#5e5e5e;"></div>
<div style="left:1523px;top:175px;width:1px;height:19px;background:#5e5e5e;"></div>
<div style="left:28px;top:194px;width:1552px;height:1px;background:#8a8a8a;"></div>
<div style="left:28px;top:194px;width:269px;height:1px;background:#0b7a3c;"></div>
<div class="t" style="left:157.73px;top:178.34px;font-size:14.3px;line-height:14.3px;color:#f2f2f2;">A</div>
<div class="t" style="left:339.23px;top:178.34px;font-size:14.3px;line-height:14.3px;color:#f2f2f2;">B</div>
<div class="t" style="left:433.84px;top:178.34px;font-size:14.3px;line-height:14.3px;color:#f2f2f2;">C</div>
<div class="t" style="left:528.84px;top:178.34px;font-size:14.3px;line-height:14.3px;color:#f2f2f2;">D</div>
<div class="t" style="left:624.23px;top:178.34px;font-size:14.3px;line-height:14.3px;color:#f2f2f2;">E</div>
<div class="t" style="left:719.63px;top:178.34px;font-size:14.3px;line-height:14.3px;color:#f2f2f2;">F</div>
<div class="t" style="left:800.44px;top:178.34px;font-size:14.3px;line-height:14.3px;color:#f2f2f2;">G</div>
<div class="t" style="left:869.34px;top:178.34px;font-size:14.3px;line-height:14.3px;color:#f2f2f2;">H</div>
<div class="t" style="left:941.01px;top:178.34px;font-size:14.3px;line-height:14.3px;color:#f2f2f2;">I</div>
<div class="t" style="left:1007.92px;top:178.34px;font-size:14.3px;line-height:14.3px;color:#f2f2f2;">J</div>
<div class="t" style="left:1075.23px;top:178.34px;font-size:14.3px;line-height:14.3px;color:#f2f2f2;">K</div>
<div class="t" style="left:1144.02px;top:178.34px;font-size:14.3px;line-height:14.3px;color:#f2f2f2;">L</div>
<div class="t" style="left:1210.54px;top:178.34px;font-size:14.3px;line-height:14.3px;color:#f2f2f2;">M</div>
<div class="t" style="left:1279.84px;top:178.34px;font-size:14.3px;line-height:14.3px;color:#f2f2f2;">N</div>
<div class="t" style="left:1347.44px;top:178.34px;font-size:14.3px;line-height:14.3px;color:#f2f2f2;">O</div>
<div class="t" style="left:1416.73px;top:178.34px;font-size:14.3px;line-height:14.3px;color:#f2f2f2;">P</div>
<div class="t" style="left:1484.44px;top:178.34px;font-size:14.3px;line-height:14.3px;color:#f2f2f2;">Q</div>
<div class="t" style="left:1553.84px;top:178.34px;font-size:14.3px;line-height:14.3px;color:#f2f2f2;">R</div>
<div style="left:0px;top:215px;width:27px;height:380px;background:#666666;"></div>
<div style="left:0px;top:214px;width:27px;height:1px;background:#2e2e2e;"></div>
<div class="t" style="left:9.82px;top:198.34px;font-size:14.3px;line-height:14.3px;color:#f2f2f2;">1</div>
<div style="left:0px;top:234px;width:27px;height:1px;background:#9a9a9a;"></div>
<div class="t" style="left:9.82px;top:218.34px;font-size:14.3px;line-height:14.3px;color:#f2f2f2;">2</div>
<div style="left:0px;top:254px;width:27px;height:1px;background:#9a9a9a;"></div>
<div class="t" style="left:9.82px;top:238.34px;font-size:14.3px;line-height:14.3px;color:#f2f2f2;">3</div>
<div style="left:0px;top:274px;width:27px;height:1px;background:#9a9a9a;"></div>
<div class="t" style="left:9.82px;top:258.35px;font-size:14.3px;line-height:14.3px;color:#f2f2f2;">4</div>
<div style="left:0px;top:294px;width:27px;height:1px;background:#9a9a9a;"></div>
<div class="t" style="left:9.82px;top:278.35px;font-size:14.3px;line-height:14.3px;color:#f2f2f2;">5</div>
<div style="left:0px;top:314px;width:27px;height:1px;background:#9a9a9a;"></div>
<div class="t" style="left:9.82px;top:298.35px;font-size:14.3px;line-height:14.3px;color:#f2f2f2;">6</div>
<div style="left:0px;top:334px;width:27px;height:1px;background:#9a9a9a;"></div>
<div class="t" style="left:9.82px;top:318.35px;font-size:14.3px;line-height:14.3px;color:#f2f2f2;">7</div>
<div style="left:0px;top:354px;width:27px;height:1px;background:#9a9a9a;"></div>
<div class="t" style="left:9.82px;top:338.35px;font-size:14.3px;line-height:14.3px;color:#f2f2f2;">8</div>
<div style="left:0px;top:374px;width:27px;height:1px;background:#9a9a9a;"></div>
<div class="t" style="left:9.82px;top:358.35px;font-size:14.3px;line-height:14.3px;color:#f2f2f2;">9</div>
<div style="left:0px;top:394px;width:27px;height:1px;background:#9a9a9a;"></div>
<div class="t" style="left:5.85px;top:378.35px;font-size:14.3px;line-height:14.3px;color:#f2f2f2;">10</div>
<div style="left:0px;top:414px;width:27px;height:1px;background:#9a9a9a;"></div>
<div class="t" style="left:6.38px;top:398.35px;font-size:14.3px;line-height:14.3px;color:#f2f2f2;">11</div>
<div style="left:0px;top:434px;width:27px;height:1px;background:#9a9a9a;"></div>
<div class="t" style="left:5.85px;top:418.35px;font-size:14.3px;line-height:14.3px;color:#f2f2f2;">12</div>
<div style="left:0px;top:454px;width:27px;height:1px;background:#9a9a9a;"></div>
<div class="t" style="left:5.85px;top:438.35px;font-size:14.3px;line-height:14.3px;color:#f2f2f2;">13</div>
<div style="left:0px;top:474px;width:27px;height:1px;background:#9a9a9a;"></div>
<div class="t" style="left:5.85px;top:458.35px;font-size:14.3px;line-height:14.3px;color:#f2f2f2;">14</div>
<div style="left:0px;top:494px;width:27px;height:1px;background:#9a9a9a;"></div>
<div class="t" style="left:5.85px;top:478.35px;font-size:14.3px;line-height:14.3px;color:#f2f2f2;">15</div>
<div style="left:0px;top:514px;width:27px;height:1px;background:#9a9a9a;"></div>
<div class="t" style="left:5.85px;top:498.35px;font-size:14.3px;line-height:14.3px;color:#f2f2f2;">16</div>
<div style="left:0px;top:534px;width:27px;height:1px;background:#9a9a9a;"></div>
<div class="t" style="left:5.85px;top:518.35px;font-size:14.3px;line-height:14.3px;color:#f2f2f2;">17</div>
<div style="left:0px;top:554px;width:27px;height:1px;background:#9a9a9a;"></div>
<div class="t" style="left:5.85px;top:538.35px;font-size:14.3px;line-height:14.3px;color:#f2f2f2;">18</div>
<div style="left:0px;top:574px;width:27px;height:1px;background:#9a9a9a;"></div>
<div class="t" style="left:5.85px;top:558.35px;font-size:14.3px;line-height:14.3px;color:#f2f2f2;">19</div>
<div style="left:0px;top:594px;width:27px;height:1px;background:#2e2e2e;"></div>
<div class="t" style="left:5.85px;top:578.35px;font-size:14.3px;line-height:14.3px;color:#f2f2f2;">20</div>
<div style="left:0px;top:614px;width:27px;height:1px;background:#2e2e2e;"></div>
<div class="t" style="left:5.85px;top:598.35px;font-size:14.3px;line-height:14.3px;color:#f2f2f2;">21</div>
<div style="left:0px;top:634px;width:27px;height:1px;background:#2e2e2e;"></div>
<div class="t" style="left:5.85px;top:618.35px;font-size:14.3px;line-height:14.3px;color:#f2f2f2;">22</div>
<div style="left:0px;top:654px;width:27px;height:1px;background:#2e2e2e;"></div>
<div class="t" style="left:5.85px;top:638.35px;font-size:14.3px;line-height:14.3px;color:#f2f2f2;">23</div>
<div style="left:0px;top:674px;width:27px;height:1px;background:#2e2e2e;"></div>
<div class="t" style="left:5.85px;top:658.35px;font-size:14.3px;line-height:14.3px;color:#f2f2f2;">24</div>
<div style="left:0px;top:694px;width:27px;height:1px;background:#2e2e2e;"></div>
<div class="t" style="left:5.85px;top:678.35px;font-size:14.3px;line-height:14.3px;color:#f2f2f2;">25</div>
<div style="left:0px;top:714px;width:27px;height:1px;background:#2e2e2e;"></div>
<div class="t" style="left:5.85px;top:698.35px;font-size:14.3px;line-height:14.3px;color:#f2f2f2;">26</div>
<div style="left:0px;top:734px;width:27px;height:1px;background:#2e2e2e;"></div>
<div class="t" style="left:5.85px;top:718.35px;font-size:14.3px;line-height:14.3px;color:#f2f2f2;">27</div>
<div style="left:0px;top:754px;width:27px;height:1px;background:#2e2e2e;"></div>
<div class="t" style="left:5.85px;top:738.35px;font-size:14.3px;line-height:14.3px;color:#f2f2f2;">28</div>
<div style="left:28px;top:215px;width:266px;height:360px;background:#c6c6c6;"></div>
<div style="left:28px;top:195px;width:743px;height:19px;background:#974806;"></div>
<div style="left:28px;top:214px;width:1552px;height:1px;background:#e6e6e6;"></div>
<div style="left:28px;top:234px;width:1552px;height:1px;background:#e6e6e6;"></div>
<div style="left:28px;top:254px;width:1552px;height:1px;background:#e6e6e6;"></div>
<div style="left:28px;top:274px;width:1552px;height:1px;background:#e6e6e6;"></div>
<div style="left:28px;top:294px;width:1552px;height:1px;background:#e6e6e6;"></div>
<div style="left:28px;top:314px;width:1552px;height:1px;background:#e6e6e6;"></div>
<div style="left:28px;top:334px;width:1552px;height:1px;background:#e6e6e6;"></div>
<div style="left:28px;top:354px;width:1552px;height:1px;background:#e6e6e6;"></div>
<div style="left:28px;top:374px;width:1552px;height:1px;background:#e6e6e6;"></div>
<div style="left:28px;top:394px;width:1552px;height:1px;background:#e6e6e6;"></div>
<div style="left:28px;top:414px;width:1552px;height:1px;background:#e6e6e6;"></div>
<div style="left:28px;top:434px;width:1552px;height:1px;background:#e6e6e6;"></div>
<div style="left:28px;top:454px;width:1552px;height:1px;background:#e6e6e6;"></div>
<div style="left:28px;top:474px;width:1552px;height:1px;background:#e6e6e6;"></div>
<div style="left:28px;top:494px;width:1552px;height:1px;background:#e6e6e6;"></div>
<div style="left:28px;top:514px;width:1552px;height:1px;background:#e6e6e6;"></div>
<div style="left:28px;top:534px;width:1552px;height:1px;background:#e6e6e6;"></div>
<div style="left:28px;top:554px;width:1552px;height:1px;background:#e6e6e6;"></div>
<div style="left:28px;top:574px;width:1552px;height:1px;background:#e6e6e6;"></div>
<div style="left:28px;top:594px;width:1552px;height:1px;background:#e6e6e6;"></div>
<div style="left:28px;top:614px;width:1552px;height:1px;background:#e6e6e6;"></div>
<div style="left:28px;top:634px;width:1552px;height:1px;background:#e6e6e6;"></div>
<div style="left:28px;top:654px;width:1552px;height:1px;background:#e6e6e6;"></div>
<div style="left:28px;top:674px;width:1552px;height:1px;background:#e6e6e6;"></div>
<div style="left:28px;top:694px;width:1552px;height:1px;background:#e6e6e6;"></div>
<div style="left:28px;top:714px;width:1552px;height:1px;background:#e6e6e6;"></div>
<div style="left:28px;top:734px;width:1552px;height:1px;background:#e6e6e6;"></div>
<div style="left:28px;top:754px;width:1552px;height:1px;background:#e6e6e6;"></div>
<div style="left:28px;top:214px;width:743px;height:0px;background:;"></div>
<div style="left:295px;top:195px;width:1px;height:550px;background:#e6e6e6;"></div>
<div style="left:390px;top:195px;width:1px;height:550px;background:#e6e6e6;"></div>
<div style="left:485px;top:195px;width:1px;height:550px;background:#e6e6e6;"></div>
<div style="left:580px;top:195px;width:1px;height:550px;background:#e6e6e6;"></div>
<div style="left:675px;top:195px;width:1px;height:550px;background:#e6e6e6;"></div>
<div style="left:770px;top:195px;width:1px;height:550px;background:#e6e6e6;"></div>
<div style="left:839px;top:195px;width:1px;height:550px;background:#e6e6e6;"></div>
<div style="left:908px;top:195px;width:1px;height:550px;background:#e6e6e6;"></div>
<div style="left:976px;top:195px;width:1px;height:550px;background:#e6e6e6;"></div>
<div style="left:1045px;top:195px;width:1px;height:550px;background:#e6e6e6;"></div>
<div style="left:1113px;top:195px;width:1px;height:550px;background:#e6e6e6;"></div>
<div style="left:1181px;top:195px;width:1px;height:550px;background:#e6e6e6;"></div>
<div style="left:1250px;top:195px;width:1px;height:550px;background:#e6e6e6;"></div>
<div style="left:1318px;top:195px;width:1px;height:550px;background:#e6e6e6;"></div>
<div style="left:1386px;top:195px;width:1px;height:550px;background:#e6e6e6;"></div>
<div style="left:1455px;top:195px;width:1px;height:550px;background:#e6e6e6;"></div>
<div style="left:1523px;top:195px;width:1px;height:550px;background:#e6e6e6;"></div>
<div style="left:28px;top:195px;width:743px;height:19px;background:#974806;"></div>
<div style="left:28px;top:234px;width:266px;height:1px;background:#b4b4b4;"></div>
<div style="left:28px;top:254px;width:266px;height:1px;background:#b4b4b4;"></div>
<div style="left:28px;top:274px;width:266px;height:1px;background:#b4b4b4;"></div>
<div style="left:28px;top:294px;width:266px;height:1px;background:#b4b4b4;"></div>
<div style="left:28px;top:314px;width:266px;height:1px;background:#b4b4b4;"></div>
<div style="left:28px;top:334px;width:266px;height:1px;background:#b4b4b4;"></div>
<div style="left:28px;top:354px;width:266px;height:1px;background:#b4b4b4;"></div>
<div style="left:28px;top:374px;width:266px;height:1px;background:#b4b4b4;"></div>
<div style="left:28px;top:394px;width:266px;height:1px;background:#b4b4b4;"></div>
<div style="left:28px;top:414px;width:266px;height:1px;background:#b4b4b4;"></div>
<div style="left:28px;top:434px;width:266px;height:1px;background:#b4b4b4;"></div>
<div style="left:28px;top:454px;width:266px;height:1px;background:#b4b4b4;"></div>
<div style="left:28px;top:474px;width:266px;height:1px;background:#b4b4b4;"></div>
<div style="left:28px;top:494px;width:266px;height:1px;background:#b4b4b4;"></div>
<div style="left:28px;top:514px;width:266px;height:1px;background:#b4b4b4;"></div>
<div style="left:28px;top:534px;width:266px;height:1px;background:#b4b4b4;"></div>
<div style="left:28px;top:554px;width:266px;height:1px;background:#b4b4b4;"></div>
<div style="left:28px;top:574px;width:266px;height:1px;background:#b4b4b4;"></div>
<div style="left:294px;top:215px;width:1px;height:360px;background:#e4e4e4;"></div>
<div style="left:0;top:195px;width:1580px;height:550px;overflow:hidden;"><div style="left:0;top:-195px;width:1600px;height:800px;"><div class="t" style="left:30.50px;top:199.44px;font-size:13.6px;line-height:13.6px;color:#ffffff;transform:scaleX(1.002);transform-origin:0 0">Product</div><div class="t" style="left:299.00px;top:199.44px;font-size:13.6px;line-height:13.6px;color:#ffffff;transform:scaleX(0.985);transform-origin:0 0">Customer</div><div class="t" style="left:393.50px;top:199.44px;font-size:13.6px;line-height:13.6px;color:#ffffff;transform:scaleX(1.014);transform-origin:0 0">Qtr 1</div><div class="t" style="left:488.50px;top:199.44px;font-size:13.6px;line-height:13.6px;color:#ffffff;transform:scaleX(1.014);transform-origin:0 0">Qtr 2</div><div class="t" style="left:583.50px;top:199.44px;font-size:13.6px;line-height:13.6px;color:#ffffff;transform:scaleX(1.014);transform-origin:0 0">Qtr 3</div><div class="t" style="left:678.50px;top:199.44px;font-size:13.6px;line-height:13.6px;color:#ffffff;transform:scaleX(1.014);transform-origin:0 0">Qtr 4</div><div class="t" style="left:30.50px;top:219.44px;font-size:13.6px;line-height:13.6px;color:#1c1c1c;transform:scaleX(1.036);transform-origin:0 0">Alice Mutton</div><div class="t" style="left:299.00px;top:219.44px;font-size:13.6px;line-height:13.6px;color:#1c1c1c;transform:scaleX(0.936);transform-origin:0 0">ANTON</div><div class="t" style="left:398.20px;top:219.44px;font-size:13.6px;line-height:13.6px;color:#1c1c1c;transform:scaleX(0.983);transform-origin:0 0">$</div><div class="t" style="left:459.51px;top:219.44px;font-size:13.6px;line-height:13.6px;color:#1c1c1c;transform:scaleX(0.991);transform-origin:0 0">-</div><div class="t" style="left:493.20px;top:219.44px;font-size:13.6px;line-height:13.6px;color:#1c1c1c;transform:scaleX(0.983);transform-origin:0 0">$</div><div class="t" style="left:533.11px;top:219.44px;font-size:13.6px;line-height:13.6px;color:#1c1c1c;transform:scaleX(0.983);transform-origin:0 0">702.00</div><div class="t" style="left:588.20px;top:219.44px;font-size:13.6px;line-height:13.6px;color:#1c1c1c;transform:scaleX(0.983);transform-origin:0 0">$</div><div class="t" style="left:649.51px;top:219.44px;font-size:13.6px;line-height:13.6px;color:#1c1c1c;transform:scaleX(0.991);transform-origin:0 0">-</div><div class="t" style="left:683.20px;top:219.44px;font-size:13.6px;line-height:13.6px;color:#1c1c1c;transform:scaleX(0.983);transform-origin:0 0">$</div><div class="t" style="left:744.51px;top:219.44px;font-size:13.6px;line-height:13.6px;color:#1c1c1c;transform:scaleX(0.991);transform-origin:0 0">-</div><div class="t" style="left:30.50px;top:239.44px;font-size:13.6px;line-height:13.6px;color:#1c1c1c;transform:scaleX(1.036);transform-origin:0 0">Alice Mutton</div><div class="t" style="left:299.00px;top:239.44px;font-size:13.6px;line-height:13.6px;color:#1c1c1c;transform:scaleX(0.821);transform-origin:0 0">BERGS</div><div class="t" style="left:398.20px;top:239.44px;font-size:13.6px;line-height:13.6px;color:#1c1c1c;transform:scaleX(0.983);transform-origin:0 0">$</div><div class="t" style="left:438.11px;top:239.44px;font-size:13.6px;line-height:13.6px;color:#1c1c1c;transform:scaleX(0.983);transform-origin:0 0">312.00</div><div class="t" style="left:493.20px;top:239.44px;font-size:13.6px;line-height:13.6px;color:#1c1c1c;transform:scaleX(0.983);transform-origin:0 0">$</div><div class="t" style="left:554.51px;top:239.44px;font-size:13.6px;line-height:13.6px;color:#1c1c1c;transform:scaleX(0.991);transform-origin:0 0">-</div><div class="t" style="left:588.20px;top:239.44px;font-size:13.6px;line-height:13.6px;color:#1c1c1c;transform:scaleX(0.983);transform-origin:0 0">$</div><div class="t" style="left:649.51px;top:239.44px;font-size:13.6px;line-height:13.6px;color:#1c1c1c;transform:scaleX(0.991);transform-origin:0 0">-</div><div class="t" style="left:683.20px;top:239.44px;font-size:13.6px;line-height:13.6px;color:#1c1c1c;transform:scaleX(0.983);transform-origin:0 0">$</div><div class="t" style="left:744.51px;top:239.44px;font-size:13.6px;line-height:13.6px;color:#1c1c1c;transform:scaleX(0.991);transform-origin:0 0">-</div><div class="t" style="left:30.50px;top:259.44px;font-size:13.6px;line-height:13.6px;color:#1c1c1c;transform:scaleX(1.036);transform-origin:0 0">Alice Mutton</div><div class="t" style="left:299.00px;top:259.44px;font-size:13.6px;line-height:13.6px;color:#1c1c1c;transform:scaleX(0.896);transform-origin:0 0">BOLID</div><div class="t" style="left:398.20px;top:259.44px;font-size:13.6px;line-height:13.6px;color:#1c1c1c;transform:scaleX(0.983);transform-origin:0 0">$</div><div class="t" style="left:459.51px;top:259.44px;font-size:13.6px;line-height:13.6px;color:#1c1c1c;transform:scaleX(0.991);transform-origin:0 0">-</div><div class="t" style="left:493.20px;top:259.44px;font-size:13.6px;line-height:13.6px;color:#1c1c1c;transform:scaleX(0.983);transform-origin:0 0">$</div><div class="t" style="left:554.51px;top:259.44px;font-size:13.6px;line-height:13.6px;color:#1c1c1c;transform:scaleX(0.991);transform-origin:0 0">-</div><div class="t" style="left:588.20px;top:259.44px;font-size:13.6px;line-height:13.6px;color:#1c1c1c;transform:scaleX(0.983);transform-origin:0 0">$</div><div class="t" style="left:649.51px;top:259.44px;font-size:13.6px;line-height:13.6px;color:#1c1c1c;transform:scaleX(0.991);transform-origin:0 0">-</div><div class="t" style="left:683.20px;top:259.44px;font-size:13.6px;line-height:13.6px;color:#1c1c1c;transform:scaleX(0.983);transform-origin:0 0">$</div><div class="t" style="left:712.01px;top:259.44px;font-size:13.6px;line-height:13.6px;color:#1c1c1c;transform:scaleX(0.982);transform-origin:0 0">1,170.00</div><div class="t" style="left:30.50px;top:279.44px;font-size:13.6px;line-height:13.6px;color:#1c1c1c;transform:scaleX(1.036);transform-origin:0 0">Alice Mutton</div><div class="t" style="left:299.00px;top:279.44px;font-size:13.6px;line-height:13.6px;color:#1c1c1c;transform:scaleX(0.935);transform-origin:0 0">BOTTM</div><div class="t" style="left:398.20px;top:279.44px;font-size:13.6px;line-height:13.6px;color:#1c1c1c;transform:scaleX(0.983);transform-origin:0 0">$</div><div class="t" style="left:427.01px;top:279.44px;font-size:13.6px;line-height:13.6px;color:#1c1c1c;transform:scaleX(0.982);transform-origin:0 0">1,170.00</div><div class="t" style="left:493.20px;top:279.44px;font-size:13.6px;line-height:13.6px;color:#1c1c1c;transform:scaleX(0.983);transform-origin:0 0">$</div><div class="t" style="left:554.51px;top:279.44px;font-size:13.6px;line-height:13.6px;color:#1c1c1c;transform:scaleX(0.991);transform-origin:0 0">-</div><div class="t" style="left:588.20px;top:279.44px;font-size:13.6px;line-height:13.6px;color:#1c1c1c;transform:scaleX(0.983);transform-origin:0 0">$</div><div class="t" style="left:649.51px;top:279.44px;font-size:13.6px;line-height:13.6px;color:#1c1c1c;transform:scaleX(0.991);transform-origin:0 0">-</div><div class="t" style="left:683.20px;top:279.44px;font-size:13.6px;line-height:13.6px;color:#1c1c1c;transform:scaleX(0.983);transform-origin:0 0">$</div><div class="t" style="left:744.51px;top:279.44px;font-size:13.6px;line-height:13.6px;color:#1c1c1c;transform:scaleX(0.991);transform-origin:0 0">-</div><div class="t" style="left:30.50px;top:299.44px;font-size:13.6px;line-height:13.6px;color:#1c1c1c;transform:scaleX(1.036);transform-origin:0 0">Alice Mutton</div><div class="t" style="left:299.00px;top:299.44px;font-size:13.6px;line-height:13.6px;color:#1c1c1c;transform:scaleX(0.850);transform-origin:0 0">ERNSH</div><div class="t" style="left:398.20px;top:299.44px;font-size:13.6px;line-height:13.6px;color:#1c1c1c;transform:scaleX(0.983);transform-origin:0 0">$</div><div class="t" style="left:427.01px;top:299.44px;font-size:13.6px;line-height:13.6px;color:#1c1c1c;transform:scaleX(0.982);transform-origin:0 0">1,123.20</div><div class="t" style="left:493.20px;top:299.44px;font-size:13.6px;line-height:13.6px;color:#1c1c1c;transform:scaleX(0.983);transform-origin:0 0">$</div><div class="t" style="left:554.51px;top:299.44px;font-size:13.6px;line-height:13.6px;color:#1c1c1c;transform:scaleX(0.991);transform-origin:0 0">-</div><div class="t" style="left:588.20px;top:299.44px;font-size:13.6px;line-height:13.6px;color:#1c1c1c;transform:scaleX(0.983);transform-origin:0 0">$</div><div class="t" style="left:649.51px;top:299.44px;font-size:13.6px;line-height:13.6px;color:#1c1c1c;transform:scaleX(0.991);transform-origin:0 0">-</div><div class="t" style="left:683.20px;top:299.44px;font-size:13.6px;line-height:13.6px;color:#1c1c1c;transform:scaleX(0.983);transform-origin:0 0">$</div><div class="t" style="left:712.01px;top:299.44px;font-size:13.6px;line-height:13.6px;color:#1c1c1c;transform:scaleX(0.982);transform-origin:0 0">2,607.15</div><div class="t" style="left:30.50px;top:319.44px;font-size:13.6px;line-height:13.6px;color:#1c1c1c;transform:scaleX(1.036);transform-origin:0 0">Alice Mutton</div><div class="t" style="left:299.00px;top:319.44px;font-size:13.6px;line-height:13.6px;color:#1c1c1c;transform:scaleX(0.878);transform-origin:0 0">GODOS</div><div class="t" style="left:398.20px;top:319.44px;font-size:13.6px;line-height:13.6px;color:#1c1c1c;transform:scaleX(0.983);transform-origin:0 0">$</div><div class="t" style="left:459.51px;top:319.44px;font-size:13.6px;line-height:13.6px;color:#1c1c1c;transform:scaleX(0.991);transform-origin:0 0">-</div><div class="t" style="left:493.20px;top:319.44px;font-size:13.6px;line-height:13.6px;color:#1c1c1c;transform:scaleX(0.983);transform-origin:0 0">$</div><div class="t" style="left:533.11px;top:319.44px;font-size:13.6px;line-height:13.6px;color:#1c1c1c;transform:scaleX(0.983);transform-origin:0 0">280.80</div><div class="t" style="left:588.20px;top:319.44px;font-size:13.6px;line-height:13.6px;color:#1c1c1c;transform:scaleX(0.983);transform-origin:0 0">$</div><div class="t" style="left:649.51px;top:319.44px;font-size:13.6px;line-height:13.6px;color:#1c1c1c;transform:scaleX(0.991);transform-origin:0 0">-</div><div class="t" style="left:683.20px;top:319.44px;font-size:13.6px;line-height:13.6px;color:#1c1c1c;transform:scaleX(0.983);transform-origin:0 0">$</div><div class="t" style="left:744.51px;top:319.44px;font-size:13.6px;line-height:13.6px;color:#1c1c1c;transform:scaleX(0.991);transform-origin:0 0">-</div><div class="t" style="left:30.50px;top:339.44px;font-size:13.6px;line-height:13.6px;color:#1c1c1c;transform:scaleX(1.036);transform-origin:0 0">Alice Mutton</div><div class="t" style="left:299.00px;top:339.44px;font-size:13.6px;line-height:13.6px;color:#1c1c1c;transform:scaleX(0.905);transform-origin:0 0">HUNGC</div><div class="t" style="left:398.20px;top:339.44px;font-size:13.6px;line-height:13.6px;color:#1c1c1c;transform:scaleX(0.983);transform-origin:0 0">$</div><div class="t" style="left:445.55px;top:339.44px;font-size:13.6px;line-height:13.6px;color:#1c1c1c;transform:scaleX(0.983);transform-origin:0 0">62.40</div><div class="t" style="left:493.20px;top:339.44px;font-size:13.6px;line-height:13.6px;color:#1c1c1c;transform:scaleX(0.983);transform-origin:0 0">$</div><div class="t" style="left:554.51px;top:339.44px;font-size:13.6px;line-height:13.6px;color:#1c1c1c;transform:scaleX(0.991);transform-origin:0 0">-</div><div class="t" style="left:588.20px;top:339.44px;font-size:13.6px;line-height:13.6px;color:#1c1c1c;transform:scaleX(0.983);transform-origin:0 0">$</div><div class="t" style="left:649.51px;top:339.44px;font-size:13.6px;line-height:13.6px;color:#1c1c1c;transform:scaleX(0.991);transform-origin:0 0">-</div><div class="t" style="left:683.20px;top:339.44px;font-size:13.6px;line-height:13.6px;color:#1c1c1c;transform:scaleX(0.983);transform-origin:0 0">$</div><div class="t" style="left:744.51px;top:339.44px;font-size:13.6px;line-height:13.6px;color:#1c1c1c;transform:scaleX(0.991);transform-origin:0 0">-</div><div class="t" style="left:30.50px;top:359.44px;font-size:13.6px;line-height:13.6px;color:#1c1c1c;transform:scaleX(1.036);transform-origin:0 0">Alice Mutton</div><div class="t" style="left:299.00px;top:359.44px;font-size:13.6px;line-height:13.6px;color:#1c1c1c;transform:scaleX(0.850);transform-origin:0 0">PICCO</div><div class="t" style="left:398.20px;top:359.44px;font-size:13.6px;line-height:13.6px;color:#1c1c1c;transform:scaleX(0.983);transform-origin:0 0">$</div><div class="t" style="left:459.51px;top:359.44px;font-size:13.6px;line-height:13.6px;color:#1c1c1c;transform:scaleX(0.991);transform-origin:0 0">-</div><div class="t" style="left:493.20px;top:359.44px;font-size:13.6px;line-height:13.6px;color:#1c1c1c;transform:scaleX(0.983);transform-origin:0 0">$</div><div class="t" style="left:522.01px;top:359.44px;font-size:13.6px;line-height:13.6px;color:#1c1c1c;transform:scaleX(0.982);transform-origin:0 0">1,560.00</div><div class="t" style="left:588.20px;top:359.44px;font-size:13.6px;line-height:13.6px;color:#1c1c1c;transform:scaleX(0.983);transform-origin:0 0">$</div><div class="t" style="left:628.11px;top:359.44px;font-size:13.6px;line-height:13.6px;color:#1c1c1c;transform:scaleX(0.983);transform-origin:0 0">936.00</div><div class="t" style="left:683.20px;top:359.44px;font-size:13.6px;line-height:13.6px;color:#1c1c1c;transform:scaleX(0.983);transform-origin:0 0">$</div><div class="t" style="left:744.51px;top:359.44px;font-size:13.6px;line-height:13.6px;color:#1c1c1c;transform:scaleX(0.991);transform-origin:0 0">-</div><div class="t" style="left:30.50px;top:379.44px;font-size:13.6px;line-height:13.6px;color:#1c1c1c;transform:scaleX(1.036);transform-origin:0 0">Alice Mutton</div><div class="t" style="left:299.00px;top:379.44px;font-size:13.6px;line-height:13.6px;color:#1c1c1c;transform:scaleX(0.870);transform-origin:0 0">RATTC</div><div class="t" style="left:398.20px;top:379.44px;font-size:13.6px;line-height:13.6px;color:#1c1c1c;transform:scaleX(0.983);transform-origin:0 0">$</div><div class="t" style="left:459.51px;top:379.44px;font-size:13.6px;line-height:13.6px;color:#1c1c1c;transform:scaleX(0.991);transform-origin:0 0">-</div><div class="t" style="left:493.20px;top:379.44px;font-size:13.6px;line-height:13.6px;color:#1c1c1c;transform:scaleX(0.983);transform-origin:0 0">$</div><div class="t" style="left:533.11px;top:379.44px;font-size:13.6px;line-height:13.6px;color:#1c1c1c;transform:scaleX(0.983);transform-origin:0 0">592.80</div><div class="t" style="left:588.20px;top:379.44px;font-size:13.6px;line-height:13.6px;color:#1c1c1c;transform:scaleX(0.983);transform-origin:0 0">$</div><div class="t" style="left:649.51px;top:379.44px;font-size:13.6px;line-height:13.6px;color:#1c1c1c;transform:scaleX(0.991);transform-origin:0 0">-</div><div class="t" style="left:683.20px;top:379.44px;font-size:13.6px;line-height:13.6px;color:#1c1c1c;transform:scaleX(0.983);transform-origin:0 0">$</div><div class="t" style="left:744.51px;top:379.44px;font-size:13.6px;line-height:13.6px;color:#1c1c1c;transform:scaleX(0.991);transform-origin:0 0">-</div><div class="t" style="left:30.50px;top:399.44px;font-size:13.6px;line-height:13.6px;color:#1c1c1c;transform:scaleX(1.036);transform-origin:0 0">Alice Mutton</div><div class="t" style="left:299.00px;top:399.44px;font-size:13.6px;line-height:13.6px;color:#1c1c1c;transform:scaleX(0.831);transform-origin:0 0">REGGC</div><div class="t" style="left:398.20px;top:399.44px;font-size:13.6px;line-height:13.6px;color:#1c1c1c;transform:scaleX(0.983);transform-origin:0 0">$</div><div class="t" style="left:459.51px;top:399.44px;font-size:13.6px;line-height:13.6px;color:#1c1c1c;transform:scaleX(0.991);transform-origin:0 0">-</div><div class="t" style="left:493.20px;top:399.44px;font-size:13.6px;line-height:13.6px;color:#1c1c1c;transform:scaleX(0.983);transform-origin:0 0">$</div><div class="t" style="left:554.51px;top:399.44px;font-size:13.6px;line-height:13.6px;color:#1c1c1c;transform:scaleX(0.991);transform-origin:0 0">-</div><div class="t" style="left:588.20px;top:399.44px;font-size:13.6px;line-height:13.6px;color:#1c1c1c;transform:scaleX(0.983);transform-origin:0 0">$</div><div class="t" style="left:649.51px;top:399.44px;font-size:13.6px;line-height:13.6px;color:#1c1c1c;transform:scaleX(0.991);transform-origin:0 0">-</div><div class="t" style="left:683.20px;top:399.44px;font-size:13.6px;line-height:13.6px;color:#1c1c1c;transform:scaleX(0.983);transform-origin:0 0">$</div><div class="t" style="left:723.11px;top:399.44px;font-size:13.6px;line-height:13.6px;color:#1c1c1c;transform:scaleX(0.983);transform-origin:0 0">741.00</div><div class="t" style="left:30.50px;top:419.44px;font-size:13.6px;line-height:13.6px;color:#1c1c1c;transform:scaleX(1.036);transform-origin:0 0">Alice Mutton</div><div class="t" style="left:299.00px;top:419.44px;font-size:13.6px;line-height:13.6px;color:#1c1c1c;transform:scaleX(0.884);transform-origin:0 0">SAVEA</div><div class="t" style="left:398.20px;top:419.44px;font-size:13.6px;line-height:13.6px;color:#1c1c1c;transform:scaleX(0.983);transform-origin:0 0">$</div><div class="t" style="left:459.51px;top:419.44px;font-size:13.6px;line-height:13.6px;color:#1c1c1c;transform:scaleX(0.991);transform-origin:0 0">-</div><div class="t" style="left:493.20px;top:419.44px;font-size:13.6px;line-height:13.6px;color:#1c1c1c;transform:scaleX(0.983);transform-origin:0 0">$</div><div class="t" style="left:554.51px;top:419.44px;font-size:13.6px;line-height:13.6px;color:#1c1c1c;transform:scaleX(0.991);transform-origin:0 0">-</div><div class="t" style="left:588.20px;top:419.44px;font-size:13.6px;line-height:13.6px;color:#1c1c1c;transform:scaleX(0.983);transform-origin:0 0">$</div><div class="t" style="left:617.01px;top:419.44px;font-size:13.6px;line-height:13.6px;color:#1c1c1c;transform:scaleX(0.982);transform-origin:0 0">3,900.00</div><div class="t" style="left:683.20px;top:419.44px;font-size:13.6px;line-height:13.6px;color:#1c1c1c;transform:scaleX(0.983);transform-origin:0 0">$</div><div class="t" style="left:723.11px;top:419.44px;font-size:13.6px;line-height:13.6px;color:#1c1c1c;transform:scaleX(0.983);transform-origin:0 0">789.75</div><div class="t" style="left:30.50px;top:439.44px;font-size:13.6px;line-height:13.6px;color:#1c1c1c;transform:scaleX(1.036);transform-origin:0 0">Alice Mutton</div><div class="t" style="left:299.00px;top:439.44px;font-size:13.6px;line-height:13.6px;color:#1c1c1c;transform:scaleX(0.796);transform-origin:0 0">SEVES</div><div class="t" style="left:398.20px;top:439.44px;font-size:13.6px;line-height:13.6px;color:#1c1c1c;transform:scaleX(0.983);transform-origin:0 0">$</div><div class="t" style="left:459.51px;top:439.44px;font-size:13.6px;line-height:13.6px;color:#1c1c1c;transform:scaleX(0.991);transform-origin:0 0">-</div><div class="t" style="left:493.20px;top:439.44px;font-size:13.6px;line-height:13.6px;color:#1c1c1c;transform:scaleX(0.983);transform-origin:0 0">$</div><div class="t" style="left:533.11px;top:439.44px;font-size:13.6px;line-height:13.6px;color:#1c1c1c;transform:scaleX(0.983);transform-origin:0 0">877.50</div><div class="t" style="left:588.20px;top:439.44px;font-size:13.6px;line-height:13.6px;color:#1c1c1c;transform:scaleX(0.983);transform-origin:0 0">$</div><div class="t" style="left:649.51px;top:439.44px;font-size:13.6px;line-height:13.6px;color:#1c1c1c;transform:scaleX(0.991);transform-origin:0 0">-</div><div class="t" style="left:683.20px;top:439.44px;font-size:13.6px;line-height:13.6px;color:#1c1c1c;transform:scaleX(0.983);transform-origin:0 0">$</div><div class="t" style="left:744.51px;top:439.44px;font-size:13.6px;line-height:13.6px;color:#1c1c1c;transform:scaleX(0.991);transform-origin:0 0">-</div><div class="t" style="left:30.50px;top:459.44px;font-size:13.6px;line-height:13.6px;color:#1c1c1c;transform:scaleX(1.036);transform-origin:0 0">Alice Mutton</div><div class="t" style="left:299.00px;top:459.44px;font-size:13.6px;line-height:13.6px;color:#1c1c1c;transform:scaleX(0.917);transform-origin:0 0">WHITC</div><div class="t" style="left:398.20px;top:459.44px;font-size:13.6px;line-height:13.6px;color:#1c1c1c;transform:scaleX(0.983);transform-origin:0 0">$</div><div class="t" style="left:459.51px;top:459.44px;font-size:13.6px;line-height:13.6px;color:#1c1c1c;transform:scaleX(0.991);transform-origin:0 0">-</div><div class="t" style="left:493.20px;top:459.44px;font-size:13.6px;line-height:13.6px;color:#1c1c1c;transform:scaleX(0.983);transform-origin:0 0">$</div><div class="t" style="left:554.51px;top:459.44px;font-size:13.6px;line-height:13.6px;color:#1c1c1c;transform:scaleX(0.991);transform-origin:0 0">-</div><div class="t" style="left:588.20px;top:459.44px;font-size:13.6px;line-height:13.6px;color:#1c1c1c;transform:scaleX(0.983);transform-origin:0 0">$</div><div class="t" style="left:649.51px;top:459.44px;font-size:13.6px;line-height:13.6px;color:#1c1c1c;transform:scaleX(0.991);transform-origin:0 0">-</div><div class="t" style="left:683.20px;top:459.44px;font-size:13.6px;line-height:13.6px;color:#1c1c1c;transform:scaleX(0.983);transform-origin:0 0">$</div><div class="t" style="left:723.11px;top:459.44px;font-size:13.6px;line-height:13.6px;color:#1c1c1c;transform:scaleX(0.983);transform-origin:0 0">780.00</div><div class="t" style="left:30.50px;top:479.44px;font-size:13.6px;line-height:13.6px;color:#1c1c1c;transform:scaleX(0.959);transform-origin:0 0">Aniseed Syrup</div><div class="t" style="left:299.00px;top:479.44px;font-size:13.6px;line-height:13.6px;color:#1c1c1c;transform:scaleX(0.866);transform-origin:0 0">ALFKI</div><div class="t" style="left:398.20px;top:479.44px;font-size:13.6px;line-height:13.6px;color:#1c1c1c;transform:scaleX(0.983);transform-origin:0 0">$</div><div class="t" style="left:459.51px;top:479.44px;font-size:13.6px;line-height:13.6px;color:#1c1c1c;transform:scaleX(0.991);transform-origin:0 0">-</div><div class="t" style="left:493.20px;top:479.44px;font-size:13.6px;line-height:13.6px;color:#1c1c1c;transform:scaleX(0.983);transform-origin:0 0">$</div><div class="t" style="left:554.51px;top:479.44px;font-size:13.6px;line-height:13.6px;color:#1c1c1c;transform:scaleX(0.991);transform-origin:0 0">-</div><div class="t" style="left:588.20px;top:479.44px;font-size:13.6px;line-height:13.6px;color:#1c1c1c;transform:scaleX(0.983);transform-origin:0 0">$</div><div class="t" style="left:649.51px;top:479.44px;font-size:13.6px;line-height:13.6px;color:#1c1c1c;transform:scaleX(0.991);transform-origin:0 0">-</div><div class="t" style="left:683.20px;top:479.44px;font-size:13.6px;line-height:13.6px;color:#1c1c1c;transform:scaleX(0.983);transform-origin:0 0">$</div><div class="t" style="left:730.55px;top:479.44px;font-size:13.6px;line-height:13.6px;color:#1c1c1c;transform:scaleX(0.983);transform-origin:0 0">60.00</div><div class="t" style="left:30.50px;top:499.44px;font-size:13.6px;line-height:13.6px;color:#1c1c1c;transform:scaleX(0.959);transform-origin:0 0">Aniseed Syrup</div><div class="t" style="left:299.00px;top:499.44px;font-size:13.6px;line-height:13.6px;color:#1c1c1c;transform:scaleX(0.935);transform-origin:0 0">BOTTM</div><div class="t" style="left:398.20px;top:499.44px;font-size:13.6px;line-height:13.6px;color:#1c1c1c;transform:scaleX(0.983);transform-origin:0 0">$</div><div class="t" style="left:459.51px;top:499.44px;font-size:13.6px;line-height:13.6px;color:#1c1c1c;transform:scaleX(0.991);transform-origin:0 0">-</div><div class="t" style="left:493.20px;top:499.44px;font-size:13.6px;line-height:13.6px;color:#1c1c1c;transform:scaleX(0.983);transform-origin:0 0">$</div><div class="t" style="left:554.51px;top:499.44px;font-size:13.6px;line-height:13.6px;color:#1c1c1c;transform:scaleX(0.991);transform-origin:0 0">-</div><div class="t" style="left:588.20px;top:499.44px;font-size:13.6px;line-height:13.6px;color:#1c1c1c;transform:scaleX(0.983);transform-origin:0 0">$</div><div class="t" style="left:649.51px;top:499.44px;font-size:13.6px;line-height:13.6px;color:#1c1c1c;transform:scaleX(0.991);transform-origin:0 0">-</div><div class="t" style="left:683.20px;top:499.44px;font-size:13.6px;line-height:13.6px;color:#1c1c1c;transform:scaleX(0.983);transform-origin:0 0">$</div><div class="t" style="left:723.11px;top:499.44px;font-size:13.6px;line-height:13.6px;color:#1c1c1c;transform:scaleX(0.983);transform-origin:0 0">200.00</div><div class="t" style="left:30.50px;top:519.44px;font-size:13.6px;line-height:13.6px;color:#1c1c1c;transform:scaleX(0.959);transform-origin:0 0">Aniseed Syrup</div><div class="t" style="left:299.00px;top:519.44px;font-size:13.6px;line-height:13.6px;color:#1c1c1c;transform:scaleX(0.850);transform-origin:0 0">ERNSH</div><div class="t" style="left:398.20px;top:519.44px;font-size:13.6px;line-height:13.6px;color:#1c1c1c;transform:scaleX(0.983);transform-origin:0 0">$</div><div class="t" style="left:459.51px;top:519.44px;font-size:13.6px;line-height:13.6px;color:#1c1c1c;transform:scaleX(0.991);transform-origin:0 0">-</div><div class="t" style="left:493.20px;top:519.44px;font-size:13.6px;line-height:13.6px;color:#1c1c1c;transform:scaleX(0.983);transform-origin:0 0">$</div><div class="t" style="left:554.51px;top:519.44px;font-size:13.6px;line-height:13.6px;color:#1c1c1c;transform:scaleX(0.991);transform-origin:0 0">-</div><div class="t" style="left:588.20px;top:519.44px;font-size:13.6px;line-height:13.6px;color:#1c1c1c;transform:scaleX(0.983);transform-origin:0 0">$</div><div class="t" style="left:649.51px;top:519.44px;font-size:13.6px;line-height:13.6px;color:#1c1c1c;transform:scaleX(0.991);transform-origin:0 0">-</div><div class="t" style="left:683.20px;top:519.44px;font-size:13.6px;line-height:13.6px;color:#1c1c1c;transform:scaleX(0.983);transform-origin:0 0">$</div><div class="t" style="left:723.11px;top:519.44px;font-size:13.6px;line-height:13.6px;color:#1c1c1c;transform:scaleX(0.983);transform-origin:0 0">180.00</div><div class="t" style="left:30.50px;top:539.44px;font-size:13.6px;line-height:13.6px;color:#1c1c1c;transform:scaleX(0.959);transform-origin:0 0">Aniseed Syrup</div><div class="t" style="left:299.00px;top:539.44px;font-size:13.6px;line-height:13.6px;color:#1c1c1c;transform:scaleX(0.916);transform-origin:0 0">LINOD</div><div class="t" style="left:398.20px;top:539.44px;font-size:13.6px;line-height:13.6px;color:#1c1c1c;transform:scaleX(0.983);transform-origin:0 0">$</div><div class="t" style="left:438.11px;top:539.44px;font-size:13.6px;line-height:13.6px;color:#1c1c1c;transform:scaleX(0.983);transform-origin:0 0">544.00</div><div class="t" style="left:493.20px;top:539.44px;font-size:13.6px;line-height:13.6px;color:#1c1c1c;transform:scaleX(0.983);transform-origin:0 0">$</div><div class="t" style="left:554.51px;top:539.44px;font-size:13.6px;line-height:13.6px;color:#1c1c1c;transform:scaleX(0.991);transform-origin:0 0">-</div><div class="t" style="left:588.20px;top:539.44px;font-size:13.6px;line-height:13.6px;color:#1c1c1c;transform:scaleX(0.983);transform-origin:0 0">$</div><div class="t" style="left:649.51px;top:539.44px;font-size:13.6px;line-height:13.6px;color:#1c1c1c;transform:scaleX(0.991);transform-origin:0 0">-</div><div class="t" style="left:683.20px;top:539.44px;font-size:13.6px;line-height:13.6px;color:#1c1c1c;transform:scaleX(0.983);transform-origin:0 0">$</div><div class="t" style="left:744.51px;top:539.44px;font-size:13.6px;line-height:13.6px;color:#1c1c1c;transform:scaleX(0.991);transform-origin:0 0">-</div><div class="t" style="left:30.50px;top:559.44px;font-size:13.6px;line-height:13.6px;color:#1c1c1c;transform:scaleX(0.959);transform-origin:0 0">Aniseed Syrup</div><div class="t" style="left:299.00px;top:559.44px;font-size:13.6px;line-height:13.6px;color:#1c1c1c;transform:scaleX(0.892);transform-origin:0 0">QUICK</div><div class="t" style="left:398.20px;top:559.44px;font-size:13.6px;line-height:13.6px;color:#1c1c1c;transform:scaleX(0.983);transform-origin:0 0">$</div><div class="t" style="left:459.51px;top:559.44px;font-size:13.6px;line-height:13.6px;color:#1c1c1c;transform:scaleX(0.991);transform-origin:0 0">-</div><div class="t" style="left:493.20px;top:559.44px;font-size:13.6px;line-height:13.6px;color:#1c1c1c;transform:scaleX(0.983);transform-origin:0 0">$</div><div class="t" style="left:533.11px;top:559.44px;font-size:13.6px;line-height:13.6px;color:#1c1c1c;transform:scaleX(0.983);transform-origin:0 0">600.00</div><div class="t" style="left:588.20px;top:559.44px;font-size:13.6px;line-height:13.6px;color:#1c1c1c;transform:scaleX(0.983);transform-origin:0 0">$</div><div class="t" style="left:649.51px;top:559.44px;font-size:13.6px;line-height:13.6px;color:#1c1c1c;transform:scaleX(0.991);transform-origin:0 0">-</div><div class="t" style="left:683.20px;top:559.44px;font-size:13.6px;line-height:13.6px;color:#1c1c1c;transform:scaleX(0.983);transform-origin:0 0">$</div><div class="t" style="left:744.51px;top:559.44px;font-size:13.6px;line-height:13.6px;color:#1c1c1c;transform:scaleX(0.991);transform-origin:0 0">-</div><div class="t" style="left:30.50px;top:579.44px;font-size:13.6px;line-height:13.6px;color:#1c1c1c;transform:scaleX(0.959);transform-origin:0 0">Aniseed Syrup</div><div class="t" style="left:299.00px;top:579.44px;font-size:13.6px;line-height:13.6px;color:#1c1c1c;transform:scaleX(0.874);transform-origin:0 0">VAFFE</div><div class="t" style="left:398.20px;top:579.44px;font-size:13.6px;line-height:13.6px;color:#1c1c1c;transform:scaleX(0.983);transform-origin:0 0">$</div><div class="t" style="left:459.51px;top:579.44px;font-size:13.6px;line-height:13.6px;color:#1c1c1c;transform:scaleX(0.991);transform-origin:0 0">-</div><div class="t" style="left:493.20px;top:579.44px;font-size:13.6px;line-height:13.6px;color:#1c1c1c;transform:scaleX(0.983);transform-origin:0 0">$</div><div class="t" style="left:554.51px;top:579.44px;font-size:13.6px;line-height:13.6px;color:#1c1c1c;transform:scaleX(0.991);transform-origin:0 0">-</div><div class="t" style="left:588.20px;top:579.44px;font-size:13.6px;line-height:13.6px;color:#1c1c1c;transform:scaleX(0.983);transform-origin:0 0">$</div><div class="t" style="left:628.11px;top:579.44px;font-size:13.6px;line-height:13.6px;color:#1c1c1c;transform:scaleX(0.983);transform-origin:0 0">140.00</div><div class="t" style="left:683.20px;top:579.44px;font-size:13.6px;line-height:13.6px;color:#1c1c1c;transform:scaleX(0.983);transform-origin:0 0">$</div><div class="t" style="left:744.51px;top:579.44px;font-size:13.6px;line-height:13.6px;color:#1c1c1c;transform:scaleX(0.991);transform-origin:0 0">-</div><div class="t" style="left:30.50px;top:599.44px;font-size:13.6px;line-height:13.6px;color:#1c1c1c;transform:scaleX(0.984);transform-origin:0 0">Boston Crab Meat</div><div class="t" style="left:299.00px;top:599.44px;font-size:13.6px;line-height:13.6px;color:#1c1c1c;transform:scaleX(0.936);transform-origin:0 0">ANTON</div><div class="t" style="left:398.20px;top:599.44px;font-size:13.6px;line-height:13.6px;color:#1c1c1c;transform:scaleX(0.983);transform-origin:0 0">$</div><div class="t" style="left:459.51px;top:599.44px;font-size:13.6px;line-height:13.6px;color:#1c1c1c;transform:scaleX(0.991);transform-origin:0 0">-</div><div class="t" style="left:493.20px;top:599.44px;font-size:13.6px;line-height:13.6px;color:#1c1c1c;transform:scaleX(0.983);transform-origin:0 0">$</div><div class="t" style="left:533.11px;top:599.44px;font-size:13.6px;line-height:13.6px;color:#1c1c1c;transform:scaleX(0.983);transform-origin:0 0">165.60</div><div class="t" style="left:588.20px;top:599.44px;font-size:13.6px;line-height:13.6px;color:#1c1c1c;transform:scaleX(0.983);transform-origin:0 0">$</div><div class="t" style="left:649.51px;top:599.44px;font-size:13.6px;line-height:13.6px;color:#1c1c1c;transform:scaleX(0.991);transform-origin:0 0">-</div><div class="t" style="left:683.20px;top:599.44px;font-size:13.6px;line-height:13.6px;color:#1c1c1c;transform:scaleX(0.983);transform-origin:0 0">$</div><div class="t" style="left:744.51px;top:599.44px;font-size:13.6px;line-height:13.6px;color:#1c1c1c;transform:scaleX(0.991);transform-origin:0 0">-</div><div class="t" style="left:30.50px;top:619.44px;font-size:13.6px;line-height:13.6px;color:#1c1c1c;transform:scaleX(0.984);transform-origin:0 0">Boston Crab Meat</div><div class="t" style="left:299.00px;top:619.44px;font-size:13.6px;line-height:13.6px;color:#1c1c1c;transform:scaleX(0.821);transform-origin:0 0">BERGS</div><div class="t" style="left:398.20px;top:619.44px;font-size:13.6px;line-height:13.6px;color:#1c1c1c;transform:scaleX(0.983);transform-origin:0 0">$</div><div class="t" style="left:459.51px;top:619.44px;font-size:13.6px;line-height:13.6px;color:#1c1c1c;transform:scaleX(0.991);transform-origin:0 0">-</div><div class="t" style="left:493.20px;top:619.44px;font-size:13.6px;line-height:13.6px;color:#1c1c1c;transform:scaleX(0.983);transform-origin:0 0">$</div><div class="t" style="left:533.11px;top:619.44px;font-size:13.6px;line-height:13.6px;color:#1c1c1c;transform:scaleX(0.983);transform-origin:0 0">920.00</div><div class="t" style="left:588.20px;top:619.44px;font-size:13.6px;line-height:13.6px;color:#1c1c1c;transform:scaleX(0.983);transform-origin:0 0">$</div><div class="t" style="left:649.51px;top:619.44px;font-size:13.6px;line-height:13.6px;color:#1c1c1c;transform:scaleX(0.991);transform-origin:0 0">-</div><div class="t" style="left:683.20px;top:619.44px;font-size:13.6px;line-height:13.6px;color:#1c1c1c;transform:scaleX(0.983);transform-origin:0 0">$</div><div class="t" style="left:744.51px;top:619.44px;font-size:13.6px;line-height:13.6px;color:#1c1c1c;transform:scaleX(0.991);transform-origin:0 0">-</div><div class="t" style="left:30.50px;top:639.44px;font-size:13.6px;line-height:13.6px;color:#1c1c1c;transform:scaleX(0.984);transform-origin:0 0">Boston Crab Meat</div><div class="t" style="left:299.00px;top:639.44px;font-size:13.6px;line-height:13.6px;color:#1c1c1c;transform:scaleX(0.908);transform-origin:0 0">BONAP</div><div class="t" style="left:398.20px;top:639.44px;font-size:13.6px;line-height:13.6px;color:#1c1c1c;transform:scaleX(0.983);transform-origin:0 0">$</div><div class="t" style="left:459.51px;top:639.44px;font-size:13.6px;line-height:13.6px;color:#1c1c1c;transform:scaleX(0.991);transform-origin:0 0">-</div><div class="t" style="left:493.20px;top:639.44px;font-size:13.6px;line-height:13.6px;color:#1c1c1c;transform:scaleX(0.983);transform-origin:0 0">$</div><div class="t" style="left:533.11px;top:639.44px;font-size:13.6px;line-height:13.6px;color:#1c1c1c;transform:scaleX(0.983);transform-origin:0 0">248.40</div><div class="t" style="left:588.20px;top:639.44px;font-size:13.6px;line-height:13.6px;color:#1c1c1c;transform:scaleX(0.983);transform-origin:0 0">$</div><div class="t" style="left:628.11px;top:639.44px;font-size:13.6px;line-height:13.6px;color:#1c1c1c;transform:scaleX(0.983);transform-origin:0 0">524.40</div><div class="t" style="left:683.20px;top:639.44px;font-size:13.6px;line-height:13.6px;color:#1c1c1c;transform:scaleX(0.983);transform-origin:0 0">$</div><div class="t" style="left:744.51px;top:639.44px;font-size:13.6px;line-height:13.6px;color:#1c1c1c;transform:scaleX(0.991);transform-origin:0 0">-</div><div class="t" style="left:30.50px;top:659.44px;font-size:13.6px;line-height:13.6px;color:#1c1c1c;transform:scaleX(0.984);transform-origin:0 0">Boston Crab Meat</div><div class="t" style="left:299.00px;top:659.44px;font-size:13.6px;line-height:13.6px;color:#1c1c1c;transform:scaleX(0.935);transform-origin:0 0">BOTTM</div><div class="t" style="left:398.20px;top:659.44px;font-size:13.6px;line-height:13.6px;color:#1c1c1c;transform:scaleX(0.983);transform-origin:0 0">$</div><div class="t" style="left:438.11px;top:659.44px;font-size:13.6px;line-height:13.6px;color:#1c1c1c;transform:scaleX(0.983);transform-origin:0 0">551.25</div><div class="t" style="left:493.20px;top:659.44px;font-size:13.6px;line-height:13.6px;color:#1c1c1c;transform:scaleX(0.983);transform-origin:0 0">$</div><div class="t" style="left:554.51px;top:659.44px;font-size:13.6px;line-height:13.6px;color:#1c1c1c;transform:scaleX(0.991);transform-origin:0 0">-</div><div class="t" style="left:588.20px;top:659.44px;font-size:13.6px;line-height:13.6px;color:#1c1c1c;transform:scaleX(0.983);transform-origin:0 0">$</div><div class="t" style="left:649.51px;top:659.44px;font-size:13.6px;line-height:13.6px;color:#1c1c1c;transform:scaleX(0.991);transform-origin:0 0">-</div><div class="t" style="left:683.20px;top:659.44px;font-size:13.6px;line-height:13.6px;color:#1c1c1c;transform:scaleX(0.983);transform-origin:0 0">$</div><div class="t" style="left:744.51px;top:659.44px;font-size:13.6px;line-height:13.6px;color:#1c1c1c;transform:scaleX(0.991);transform-origin:0 0">-</div><div class="t" style="left:30.50px;top:679.44px;font-size:13.6px;line-height:13.6px;color:#1c1c1c;transform:scaleX(0.984);transform-origin:0 0">Boston Crab Meat</div><div class="t" style="left:299.00px;top:679.44px;font-size:13.6px;line-height:13.6px;color:#1c1c1c;transform:scaleX(0.842);transform-origin:0 0">BSBEV</div><div class="t" style="left:398.20px;top:679.44px;font-size:13.6px;line-height:13.6px;color:#1c1c1c;transform:scaleX(0.983);transform-origin:0 0">$</div><div class="t" style="left:438.11px;top:679.44px;font-size:13.6px;line-height:13.6px;color:#1c1c1c;transform:scaleX(0.983);transform-origin:0 0">147.00</div><div class="t" style="left:493.20px;top:679.44px;font-size:13.6px;line-height:13.6px;color:#1c1c1c;transform:scaleX(0.983);transform-origin:0 0">$</div><div class="t" style="left:554.51px;top:679.44px;font-size:13.6px;line-height:13.6px;color:#1c1c1c;transform:scaleX(0.991);transform-origin:0 0">-</div><div class="t" style="left:588.20px;top:679.44px;font-size:13.6px;line-height:13.6px;color:#1c1c1c;transform:scaleX(0.983);transform-origin:0 0">$</div><div class="t" style="left:649.51px;top:679.44px;font-size:13.6px;line-height:13.6px;color:#1c1c1c;transform:scaleX(0.991);transform-origin:0 0">-</div><div class="t" style="left:683.20px;top:679.44px;font-size:13.6px;line-height:13.6px;color:#1c1c1c;transform:scaleX(0.983);transform-origin:0 0">$</div><div class="t" style="left:744.51px;top:679.44px;font-size:13.6px;line-height:13.6px;color:#1c1c1c;transform:scaleX(0.991);transform-origin:0 0">-</div><div class="t" style="left:30.50px;top:699.44px;font-size:13.6px;line-height:13.6px;color:#1c1c1c;transform:scaleX(0.984);transform-origin:0 0">Boston Crab Meat</div><div class="t" style="left:299.00px;top:699.44px;font-size:13.6px;line-height:13.6px;color:#1c1c1c;transform:scaleX(0.855);transform-origin:0 0">FRANS</div><div class="t" style="left:398.20px;top:699.44px;font-size:13.6px;line-height:13.6px;color:#1c1c1c;transform:scaleX(0.983);transform-origin:0 0">$</div><div class="t" style="left:459.51px;top:699.44px;font-size:13.6px;line-height:13.6px;color:#1c1c1c;transform:scaleX(0.991);transform-origin:0 0">-</div><div class="t" style="left:493.20px;top:699.44px;font-size:13.6px;line-height:13.6px;color:#1c1c1c;transform:scaleX(0.983);transform-origin:0 0">$</div><div class="t" style="left:554.51px;top:699.44px;font-size:13.6px;line-height:13.6px;color:#1c1c1c;transform:scaleX(0.991);transform-origin:0 0">-</div><div class="t" style="left:588.20px;top:699.44px;font-size:13.6px;line-height:13.6px;color:#1c1c1c;transform:scaleX(0.983);transform-origin:0 0">$</div><div class="t" style="left:649.51px;top:699.44px;font-size:13.6px;line-height:13.6px;color:#1c1c1c;transform:scaleX(0.991);transform-origin:0 0">-</div><div class="t" style="left:683.20px;top:699.44px;font-size:13.6px;line-height:13.6px;color:#1c1c1c;transform:scaleX(0.983);transform-origin:0 0">$</div><div class="t" style="left:730.55px;top:699.44px;font-size:13.6px;line-height:13.6px;color:#1c1c1c;transform:scaleX(0.983);transform-origin:0 0">18.40</div><div class="t" style="left:30.50px;top:719.44px;font-size:13.6px;line-height:13.6px;color:#1c1c1c;transform:scaleX(0.984);transform-origin:0 0">Boston Crab Meat</div><div class="t" style="left:299.00px;top:719.44px;font-size:13.6px;line-height:13.6px;color:#1c1c1c;transform:scaleX(0.915);transform-origin:0 0">HILAA</div><div class="t" style="left:398.20px;top:719.44px;font-size:13.6px;line-height:13.6px;color:#1c1c1c;transform:scaleX(0.983);transform-origin:0 0">$</div><div class="t" style="left:459.51px;top:719.44px;font-size:13.6px;line-height:13.6px;color:#1c1c1c;transform:scaleX(0.991);transform-origin:0 0">-</div><div class="t" style="left:493.20px;top:719.44px;font-size:13.6px;line-height:13.6px;color:#1c1c1c;transform:scaleX(0.983);transform-origin:0 0">$</div><div class="t" style="left:540.55px;top:719.44px;font-size:13.6px;line-height:13.6px;color:#1c1c1c;transform:scaleX(0.983);transform-origin:0 0">92.00</div><div class="t" style="left:588.20px;top:719.44px;font-size:13.6px;line-height:13.6px;color:#1c1c1c;transform:scaleX(0.983);transform-origin:0 0">$</div><div class="t" style="left:617.01px;top:719.44px;font-size:13.6px;line-height:13.6px;color:#1c1c1c;transform:scaleX(0.982);transform-origin:0 0">1,104.00</div><div class="t" style="left:683.20px;top:719.44px;font-size:13.6px;line-height:13.6px;color:#1c1c1c;transform:scaleX(0.983);transform-origin:0 0">$</div><div class="t" style="left:744.51px;top:719.44px;font-size:13.6px;line-height:13.6px;color:#1c1c1c;transform:scaleX(0.991);transform-origin:0 0">-</div><div class="t" style="left:30.50px;top:739.44px;font-size:13.6px;line-height:13.6px;color:#1c1c1c;transform:scaleX(0.984);transform-origin:0 0">Boston Crab Meat</div><div class="t" style="left:299.00px;top:739.44px;font-size:13.6px;line-height:13.6px;color:#1c1c1c;transform:scaleX(0.842);transform-origin:0 0">LAZYK</div><div class="t" style="left:398.20px;top:739.44px;font-size:13.6px;line-height:13.6px;color:#1c1c1c;transform:scaleX(0.983);transform-origin:0 0">$</div><div class="t" style="left:438.11px;top:739.44px;font-size:13.6px;line-height:13.6px;color:#1c1c1c;transform:scaleX(0.983);transform-origin:0 0">147.00</div><div class="t" style="left:493.20px;top:739.44px;font-size:13.6px;line-height:13.6px;color:#1c1c1c;transform:scaleX(0.983);transform-origin:0 0">$</div><div class="t" style="left:554.51px;top:739.44px;font-size:13.6px;line-height:13.6px;color:#1c1c1c;transform:scaleX(0.991);transform-origin:0 0">-</div><div class="t" style="left:588.20px;top:739.44px;font-size:13.6px;line-height:13.6px;color:#1c1c1c;transform:scaleX(0.983);transform-origin:0 0">$</div><div class="t" style="left:649.51px;top:739.44px;font-size:13.6px;line-height:13.6px;color:#1c1c1c;transform:scaleX(0.991);transform-origin:0 0">-</div><div class="t" style="left:683.20px;top:739.44px;font-size:13.6px;line-height:13.6px;color:#1c1c1c;transform:scaleX(0.983);transform-origin:0 0">$</div><div class="t" style="left:744.51px;top:739.44px;font-size:13.6px;line-height:13.6px;color:#1c1c1c;transform:scaleX(0.991);transform-origin:0 0">-</div></div></div>
<div style="left:27px;top:214px;width:270px;height:382px;background:transparent;border:1px solid #0a6418;box-sizing:border-box;"></div>
<div style="left:28px;top:215px;width:268px;height:380px;background:transparent;border:1px solid #ffffff;box-sizing:border-box;"></div>
<div style="left:292px;top:592px;width:7px;height:7px;background:#ffffff;"></div>
<div style="left:293px;top:593px;width:5px;height:5px;background:#0a6418;"></div>
<div style="left:1580px;top:175px;width:20px;height:571px;background:#1e2327;"></div>
<div style="left:1580px;top:194px;width:1px;height:552px;background:#050505;"></div>
<div style="left:1583px;top:175px;width:16px;height:571px;background:#141414;border-radius:8px;"></div>
<svg style="position:absolute;left:1585px;top:178px;" width="12" height="11" viewBox="0 0 12 11"><path d="M1 9.5L6 2l5 7.5z" fill="#a0a0a0" stroke="#050505" stroke-width="0.8" stroke-linejoin="round"/></svg>
<div style="left:1585px;top:191px;width:12px;height:55px;background:#9a9a9a;border-radius:6px;border:1px solid #0a0a0a;box-sizing:border-box;"></div>
<svg style="position:absolute;left:1585px;top:733px;" width="12" height="10" viewBox="0 0 12 10"><path d="M1 1.5L6 8.5l5-7z" fill="#a0a0a0" stroke="#050505" stroke-width="0.8" stroke-linejoin="round"/></svg>
<div style="left:0px;top:745px;width:1600px;height:33px;background:#131a1c;"></div>
<div style="left:0px;top:745px;width:1580px;height:1px;background:#080808;"></div>
<div style="left:110px;top:745px;width:112px;height:10px;background:#ffffff;"></div>
<div style="left:0px;top:745px;width:118px;height:33px;background:#131a1c;border-top-right-radius:6px;"></div>
<div style="left:215px;top:745px;width:1385px;height:33px;background:#131a1c;border-top-left-radius:6px;"></div>
<div style="left:118px;top:745px;width:97px;height:29px;background:#ffffff;border-radius:0 0 7px 7px;"></div>
<svg style="position:absolute;left:24px;top:755px;" width="12" height="12" viewBox="0 0 12 12"><polyline points="8,1 3,6 8,11" fill="none" stroke="#9a9a9a" stroke-width="1.3"/></svg>
<svg style="position:absolute;left:58px;top:755px;" width="12" height="12" viewBox="0 0 12 12"><polyline points="3,1 8,6 3,11" fill="none" stroke="#9a9a9a" stroke-width="1.3"/></svg>
<div class="t u" style="left:126.40px;top:752.10px;font-size:14px;line-height:14px;color:#1e1e1e;transform:scaleX(1.0177);transform-origin:0 0;">Source Data</div>
<div style="left:126px;top:770px;width:80px;height:1.6px;background:#0e7a2a;"></div>
<div style="left:219px;top:751px;width:1.5px;height:20px;background:#505050;"></div>
<div style="left:317px;top:751px;width:1.5px;height:20px;background:#505050;"></div>
<div style="left:485px;top:751px;width:1.5px;height:20px;background:#505050;"></div>
<div style="left:707px;top:751px;width:1.5px;height:20px;background:#505050;"></div>
<div class="t u" style="left:233.00px;top:754.60px;font-size:14px;line-height:14px;color:#e6e6e6;transform:scaleX(1.0135);transform-origin:0 0;">By Product</div>
<div class="t u" style="left:332.80px;top:754.60px;font-size:14px;line-height:14px;color:#e6e6e6;transform:scaleX(1.0275);transform-origin:0 0;">By Product-Customer</div>
<div class="t u" style="left:500.60px;top:754.60px;font-size:14px;line-height:14px;color:#e6e6e6;transform:scaleX(1.0304);transform-origin:0 0;">By Product-Customer Filtered</div>
<svg style="position:absolute;left:750px;top:755px;" width="13" height="13" viewBox="0 0 13 13"><path d="M6.5 0.5v12M0.5 6.5h12" stroke="#d8d8d8" stroke-width="1.5"/></svg>
<div style="left:963px;top:756px;width:3px;height:3px;background:#d8d8d8;"></div>
<div style="left:963px;top:760.5px;width:3px;height:3px;background:#d8d8d8;"></div>
<div style="left:963px;top:765px;width:3px;height:3px;background:#d8d8d8;"></div>
<div style="left:981px;top:751.5px;width:601px;height:19px;background:#161616;border-radius:10px;"></div>
<svg style="position:absolute;left:985px;top:755px;" width="10" height="12" viewBox="0 0 10 12"><path d="M9 1L1.5 6 9 11z" fill="#a0a0a0"/></svg>
<div style="left:997px;top:754.5px;width:536px;height:13px;background:#9a9a9a;border-radius:7px;border:1px solid #0a0a0a;box-sizing:border-box;"></div>
<svg style="position:absolute;left:1568px;top:755px;" width="10" height="12" viewBox="0 0 10 12"><path d="M1 1l7.5 5L1 11z" fill="#a0a0a0"/></svg>
<div style="left:0px;top:778px;width:1600px;height:1px;background:#2f3436;"></div>
<div style="left:0px;top:779px;width:1600px;height:19px;background:#171717;"></div>
<div class="t u" style="left:12.40px;top:784.73px;font-size:11.5px;line-height:11.5px;color:#d0d0d0;transform:scaleX(0.9024);transform-origin:0 0;">Ready</div>
<svg style="position:absolute;left:62px;top:781px;" width="18" height="17" viewBox="0 0 18 17"><circle cx="7" cy="3" r="2" fill="none" stroke="#d0d0d0" stroke-width="1.1"/><path d="M1.5 4.5c1 2 3 2.5 5.5 2.5s4.5-.5 5.5-2.5M7 7v4c0 1.5-2 2.5-2 4M5 15.5h1" fill="none" stroke="#d0d0d0" stroke-width="1.1"/><path d="M9 12.5l2.5 2.5 5-5" fill="none" stroke="#d0d0d0" stroke-width="1.2"/></svg>
<div class="t u" style="left:81.00px;top:784.73px;font-size:11.5px;line-height:11.5px;color:#d0d0d0;transform:scaleX(0.9577);transform-origin:0 0;">Accessibility: Good to go</div>
<div class="t u" style="left:1226.70px;top:784.73px;font-size:11.5px;line-height:11.5px;color:#d0d0d0;transform:scaleX(0.9084);transform-origin:0 0;">Count: 19</div>
<div style="left:1291.5px;top:779px;width:41.5px;height:19px;background:#262626;"></div>
<svg style="position:absolute;left:1304px;top:782px;" width="16" height="14" viewBox="0 0 16 14"><rect x="0.7" y="0.7" width="14" height="12.6" fill="none" stroke="#d8d8d8" stroke-width="1.4"/><path d="M5.3 1v12M10 1v12M1 4.9h14M1 9.1h14" stroke="#d8d8d8" stroke-width="1.4"/></svg>
<svg style="position:absolute;left:1346px;top:782px;" width="16" height="14" viewBox="0 0 16 14"><rect x="0.7" y="0.7" width="14.6" height="12.6" fill="none" stroke="#c8c8c8" stroke-width="1.3"/><rect x="4" y="2.5" width="8" height="9" fill="none" stroke="#c8c8c8" stroke-width="1"/><path d="M5.5 5.5h5M5.5 8h5" stroke="#c8c8c8" stroke-width="0.8"/></svg>
<svg style="position:absolute;left:1388px;top:782px;" width="16" height="14" viewBox="0 0 16 14"><path d="M0.7 0.7h14.6v12.6H0.7zM7 0.7v6h5V0.7" fill="none" stroke="#d0d0d0" stroke-width="1.4"/></svg>
<div style="left:1422px;top:789px;width:9px;height:1.5px;background:#c8c8c8;"></div>
<div style="left:1435.5px;top:789px;width:104px;height:2px;background:#7a7a7a;"></div>
<div style="left:1485.5px;top:783.5px;width:5.5px;height:12px;background:#bdbdbd;border-radius:1px;"></div>
<svg style="position:absolute;left:1544px;top:784px;" width="10" height="10" viewBox="0 0 10 10"><path d="M5 0.5v9M0.5 5h9" stroke="#c8c8c8" stroke-width="1.3"/></svg>
<div class="t u" style="left:1567.30px;top:784.73px;font-size:11.5px;line-height:11.5px;color:#d0d0d0;transform:scaleX(0.8738);transform-origin:0 0;">100%</div>
</body></html>
